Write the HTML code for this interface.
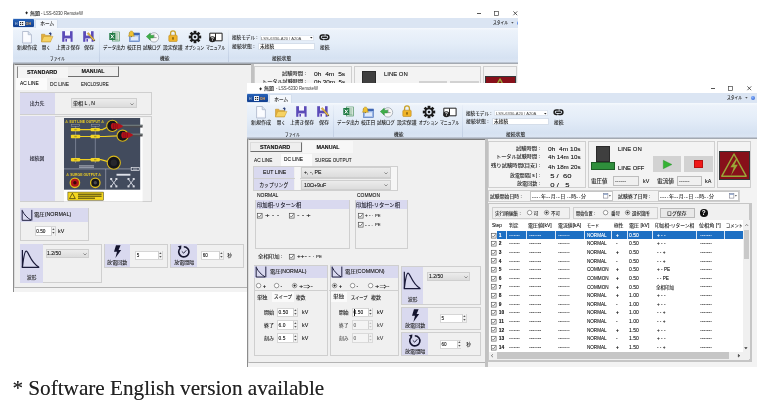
<!DOCTYPE html><html lang="ja"><head><meta charset="utf-8"><title>LSS-6330 RemoteW</title><style>html,body{margin:0;padding:0;background:#fff}#root{position:relative;width:768px;height:406px;overflow:hidden;will-change:transform;font-family:"Liberation Sans","Noto Sans CJK JP",sans-serif;color:#242424}#root div,#root svg{position:absolute;box-sizing:border-box}#root svg{overflow:visible}#root span{position:static}.d{letter-spacing:.5px}.t{line-height:12px;white-space:nowrap;text-shadow:0 0 .4px rgba(40,40,40,.55)}</style></head><body><div id="root"><div style="left:0;top:0;width:518px;height:406px;overflow:hidden">
<div style="left:13px;top:7.6px;width:510px;height:284.2px;background:#fff"></div>
<svg style="left:25px;top:11.4px;" width="3.2" height="3.6" viewBox="0 0 3.2 3.6"><path d="M1.6 .2l1.3 1.6-1.3 1.6-1.3-1.6z" fill="#222"/></svg>
<div class="t" style="left:29.8px;top:7px;font-size:5px;transform:scaleX(1.018);transform-origin:left center;color:#222">無題</div>
<div class="t" style="left:41.4px;top:7.92px;font-size:4.5px;transform:scaleX(0.954);transform-origin:left center;color:#333;text-shadow:none">- LSS-6330 RemoteW</div>
<div style="left:476.6px;top:12.9px;width:4.2px;height:0.7px;background:#555"></div>
<svg style="left:494px;top:10.8px;" width="5" height="5" viewBox="0 0 5 5"><rect x=".5" y=".5" width="4" height="4" fill="none" stroke="#444" stroke-width=".7"/></svg>
<svg style="left:512.6px;top:11px;" width="4.6" height="4.6" viewBox="0 0 4.6 4.6"><path d="M.4 .4l3.8 3.8M4.2 .4l-3.8 3.8" stroke="#333" stroke-width=".8"/></svg>
<div style="left:13px;top:18.1px;width:510px;height:9.7px;background:#dbe5f3"></div>
<div style="left:13.2px;top:19px;width:20.6px;height:8.4px;background:linear-gradient(#2863b8,#123f8f);border-radius:1px"></div>
<div style="left:19.4px;top:20.6px;width:5.2px;height:5.4px;background:#f2f5fb"></div>
<svg style="left:19.4px;top:20.6px;" width="5.2" height="5.4" viewBox="0 0 5.2 5.4"><path d="M1 1.6h1.2M3 1.6h1.2M1 3.4h1.2M3 3.4h1.2" stroke="#111" stroke-width="1"/></svg>
<div class="t" style="left:25.6px;top:17.8px;font-size:3.6px;color:#e8b070;font-weight:bold">OH</div>
<div class="t" style="left:15px;top:17.7px;font-size:3.6px;color:#9fc0f0;font-weight:bold">H</div>
<div style="left:35px;top:18.6px;width:22.6px;height:9.4px;background:#f3f7fc;border:.5px solid #d3deed;border-bottom:none;border-radius:1.2px 1.2px 0 0"></div>
<div class="t" style="left:-103.2px;width:300px;text-align:center;top:18.46px;font-size:4.9px;color:#222"><span style="display:inline-block;transform:scaleX(0.950);transform-origin:center center;">ホーム</span></div>
<div class="t" style="left:493px;top:17.18px;font-size:4.4px;transform:scaleX(0.853);transform-origin:left center;color:#222">スタイル</div>
<svg style="left:510.6px;top:21.8px;" width="3" height="2" viewBox="0 0 3 2"><path d="M.2 .2h2.4l-1.2 1.4z" fill="#222"/></svg>
<div style="left:517px;top:20.8px;width:4.2px;height:4.2px;border-radius:50%;background:radial-gradient(circle at 40% 35%,#8fb6ff,#1f56c8)"></div>
<div style="left:13px;top:27.8px;width:510px;height:34.4px;background:linear-gradient(#f6f9fd 0%,#ecf2fa 8%,#e4edf8 45%,#d6e2f2 88%,#dbe5f3 100%)"></div>
<div style="left:99.3px;top:30px;width:0.7px;height:31.5px;background:linear-gradient(rgba(200,212,230,.1),rgba(186,200,222,.7))"></div>
<div style="left:228.3px;top:30px;width:0.7px;height:31.5px;background:linear-gradient(rgba(200,212,230,.1),rgba(186,200,222,.7))"></div>
<div style="left:333.5px;top:30px;width:0.7px;height:31.5px;background:linear-gradient(rgba(200,212,230,.1),rgba(186,200,222,.7))"></div>
<svg style="left:22.2px;top:30.6px;" width="10" height="12.5" viewBox="0 0 10 12.5"><path d="M0.6 0.5h5.6l3.2 3.2v8.3h-8.8z" fill="#fbfcff" stroke="#a9b4c8" stroke-width=".8"/><path d="M6.2 .5v3.2h3.2" fill="#d5deee" stroke="#a9b4c8" stroke-width=".7"/><path d="M1.4 11.4h7.2" stroke="#d3dbea" stroke-width=".8"/></svg>
<svg style="left:40.6px;top:31.6px;" width="12.4" height="10.4" viewBox="0 0 12.4 10.4"><path d="M.5 9.8v-7.6h3.2l1 1.2h4.8v6.4z" fill="#e3ae3a" stroke="#b88720" stroke-width=".5"/><path d="M7.6 1.8l1.6-1.5 1.8 1.3-1 .2.6 1.4-1.2.4-.6-1.5z" fill="#2a3f7a"/><path d="M.5 9.8l2.3-5.4h9.2l-2.5 5.4z" fill="#f6d262" stroke="#c79a2c" stroke-width=".5"/></svg>
<svg style="left:62px;top:31.2px;" width="12" height="11" viewBox="0 0 12 11"><rect x=".2" y=".2" width="10.4" height="10.6" fill="#5b4bb8"/><rect x="3" y="0" width="5" height="4.6" fill="#f6f6fd"/><rect x="2.4" y="7.4" width="6.2" height="3.6" fill="#f1f1fa"/><rect x="3.4" y="8" width="1.6" height="2.6" fill="#5b4bb8"/></svg>
<svg style="left:83.2px;top:31.2px;" width="12" height="11" viewBox="0 0 12 11"><rect x=".2" y=".2" width="10.4" height="10.6" fill="#5b4bb8"/><rect x="3" y="0" width="5" height="4.6" fill="#f6f6fd"/><rect x="2.4" y="7.4" width="6.2" height="3.6" fill="#f1f1fa"/><rect x="3.4" y="8" width="1.6" height="2.6" fill="#5b4bb8"/><path d="M4.2 2.6l6.2 7 1.4.4-.3-1.6-6.1-6.8z" fill="#e9bd3e" stroke="#86661a" stroke-width=".4"/><path d="M10.6 9.8l1.3.3-.4-1.4z" fill="#333"/></svg>
<svg style="left:108.8px;top:31px;" width="11" height="11" viewBox="0 0 11 11"><rect x="3.5" y="1" width="7" height="9" fill="#fff" stroke="#2d7d46" stroke-width=".6"/><path d="M6 3h3.6M6 5h3.6M6 7h3.6M6 8.8h3.6" stroke="#2d7d46" stroke-width=".7"/><rect x=".3" y="2" width="6" height="7" fill="#1f7a43"/><path d="M1.8 3.6l3 3.9M4.8 3.6l-3 3.9" stroke="#fff" stroke-width="1"/></svg>
<svg style="left:128px;top:30.4px;" width="12" height="12" viewBox="0 0 12 12"><rect x="1.5" y="3" width="10" height="8.6" fill="#9ab6e6" stroke="#4a6fb5" stroke-width=".6"/><rect x="1.5" y="3" width="10" height="2" fill="#3f66b3"/><rect x="3" y="6.3" width="7" height="4" fill="#dfe9fa"/><path d="M1 5.2c0-3 1-4.2 2.4-4.2s2.4 1.2 2.4 4.2l.7 1h-6.2z" fill="#f1c232" stroke="#9b7a12" stroke-width=".4"/><circle cx="3.4" cy="6.6" r=".7" fill="#9b7a12"/></svg>
<svg style="left:146.2px;top:30.8px;" width="13" height="12" viewBox="0 0 13 12"><circle cx="8" cy="6.4" r="4.7" fill="#f7f7f7" stroke="#9aa3ad" stroke-width=".8"/><path d="M8 3.4v3.2h2.6" stroke="#777" stroke-width=".7" fill="none"/><path d="M.3 5.6l4-3.6v2.2h3.2v2.8h-3.2v2.2z" fill="#3fae49" stroke="#1f7a2b" stroke-width=".4"/></svg>
<svg style="left:168.2px;top:30.2px;" width="10" height="12" viewBox="0 0 10 12"><path d="M2.6 5.5v-2.2a2.4 2.4 0 0 1 4.8 0v2.2" fill="none" stroke="#c9a227" stroke-width="1.3"/><rect x=".8" y="5.2" width="8.4" height="6.3" rx=".8" fill="#f0b429" stroke="#b07c10" stroke-width=".5"/><rect x="4.3" y="7.2" width="1.4" height="2.4" fill="#7a5607"/></svg>
<svg style="left:188.6px;top:30.8px;" width="12" height="12" viewBox="0 0 12 12"><rect x="4.6" y="-.2" width="2.8" height="12.4" transform="rotate(0 6 6)" fill="#1b1b1b"/><rect x="4.6" y="-.2" width="2.8" height="12.4" transform="rotate(45 6 6)" fill="#1b1b1b"/><rect x="4.6" y="-.2" width="2.8" height="12.4" transform="rotate(90 6 6)" fill="#1b1b1b"/><rect x="4.6" y="-.2" width="2.8" height="12.4" transform="rotate(135 6 6)" fill="#1b1b1b"/><circle cx="6" cy="6" r="4.3" fill="#1b1b1b"/><circle cx="6" cy="6" r="2.7" fill="#e4ecf6"/><circle cx="6" cy="6" r="1.3" fill="#1b1b1b"/></svg>
<svg style="left:209px;top:31.6px;" width="14" height="11" viewBox="0 0 14 11"><path d="M6.5 1.2h6.6v7.6h-6.6" fill="#fff" stroke="#222" stroke-width="1"/><path d="M.8 1.2h5.7v7.6h-5.7z" fill="#fff" stroke="#222" stroke-width="1"/><circle cx="3.4" cy="7.2" r="3" fill="#222"/><text x="3.4" y="9" font-size="4.6" font-family="Liberation Sans,sans-serif" font-weight="bold" fill="#fff" text-anchor="middle">?</text></svg>
<div class="t" style="left:17.2px;top:41.96px;font-size:4.9px;transform:scaleX(1.022);transform-origin:left center;">新規作成</div>
<div class="t" style="left:42.4px;top:41.96px;font-size:4.9px;transform:scaleX(0.857);transform-origin:left center;">開く</div>
<div class="t" style="left:56px;top:41.96px;font-size:4.9px;transform:scaleX(0.981);transform-origin:left center;">上書き保存</div>
<div class="t" style="left:84.4px;top:41.96px;font-size:4.9px;transform:scaleX(1.041);transform-origin:left center;">保存</div>
<div class="t" style="left:103px;top:41.96px;font-size:4.9px;transform:scaleX(0.899);transform-origin:left center;">データ出力</div>
<div class="t" style="left:127px;top:41.96px;font-size:4.9px;transform:scaleX(0.980);transform-origin:left center;">校正日</div>
<div class="t" style="left:143.2px;top:41.96px;font-size:4.9px;transform:scaleX(0.909);transform-origin:left center;">試験ログ</div>
<div class="t" style="left:163px;top:41.96px;font-size:4.9px;transform:scaleX(1.001);transform-origin:left center;">設定保護</div>
<div class="t" style="left:185px;top:41.96px;font-size:4.9px;transform:scaleX(0.777);transform-origin:left center;">オプション</div>
<div class="t" style="left:205.8px;top:41.96px;font-size:4.9px;transform:scaleX(0.781);transform-origin:left center;">マニュアル</div>
<div class="t" style="left:50.4px;top:53.46px;font-size:4.6px;transform:scaleX(0.794);transform-origin:left center;color:#222">ファイル</div>
<div class="t" style="left:159.6px;top:53.46px;font-size:4.6px;transform:scaleX(1.021);transform-origin:left center;color:#222">機能</div>
<div class="t" style="left:272px;top:53.46px;font-size:4.6px;transform:scaleX(1.055);transform-origin:left center;color:#222">接続状態</div>
<div class="t" style="left:232px;top:32.49px;font-size:4.7px;transform:scaleX(0.983);transform-origin:left center;">接続モデル :</div>
<div class="t" style="left:232px;top:41.39px;font-size:4.7px;transform:scaleX(1.058);transform-origin:left center;">接続状態 :</div>
<div style="left:260px;top:34.6px;width:53.6px;height:6.8px;background:#fff;border:.5px solid #dfe6f0"></div>
<div class="t" style="left:261.4px;top:32.54px;font-size:4px;transform:scaleX(1.027);transform-origin:left center;color:#444;text-shadow:none">LSS-6330-A20 / A20A</div>
<svg style="left:309.6px;top:37.4px;" width="2.6" height="1.8" viewBox="0 0 2.6 1.8"><path d="M.1 .1h2.4l-1.2 1.5z" fill="#222"/></svg>
<div style="left:258.2px;top:42.9px;width:57px;height:6.7px;background:#fff;border:.5px solid #d5deea"></div>
<div class="t" style="left:260.2px;top:41.09px;font-size:4.7px;transform:scaleX(1.009);transform-origin:left center;color:#222">未接続</div>
<svg style="left:319.2px;top:33.8px;" width="11" height="6.4" viewBox="0 0 11 6.4"><path d="M5.2 1H3.3a2.2 2.2 0 0 0 0 4.4H4M5.8 5.4h1.9a2.2 2.2 0 0 0 0-4.4H7M3.4 3.2h4.2" fill="none" stroke="#1b1b1b" stroke-width="1.5" stroke-linecap="round"/></svg>
<div class="t" style="left:319.6px;top:41.83px;font-size:4.8px;transform:scaleX(0.978);transform-origin:left center;">接続</div>
<div style="left:13px;top:64px;width:510px;height:227.6px;background:#f3f3f3"></div>
<div style="left:13px;top:62.2px;width:510px;height:2.2px;background:linear-gradient(#d3deee 0%,#a9b0bb 45%,#9da3ac 70%,#c4c7cc 100%)"></div>
<div style="left:13px;top:63.6px;width:1px;height:228.6px;background:#8c8c8c"></div>
<div style="left:14px;top:64px;width:237.2px;height:224.4px;border-bottom:1.2px solid #b4b4b4;border-left:.6px solid #dcdcdc;border-top:1.3px solid #7c7c7c;background:#f0f0f0"></div>
<div style="left:251.2px;top:64px;width:2.8px;height:227.6px;background:#c1c1c1"></div>
<div style="left:253.5px;top:66.3px;width:98.6px;height:47px;border:.7px solid #cfcfcf"></div>
<div class="t" style="left:282.1px;top:67.73px;font-size:4.8px;transform:scaleX(1.098);transform-origin:left center;color:#222">試験時間 :</div>
<div class="t" style="left:314.3px;top:67.82px;font-size:5.9px;transform:scaleX(1.134);transform-origin:left center;color:#222;white-space:pre">0h  4m  5s</div>
<div class="t" style="left:262.1px;top:76.13px;font-size:4.8px;transform:scaleX(1.072);transform-origin:left center;color:#222">トータル試験時間 :</div>
<div class="t" style="left:314.3px;top:76.22px;font-size:5.9px;transform:scaleX(1.070);transform-origin:left center;color:#222;white-space:pre">0h 30m  5s</div>
<div class="t" style="left:256.9px;top:85.33px;font-size:4.8px;transform:scaleX(1.112);transform-origin:left center;color:#222">残り試験時間(目安) :</div>
<div class="t" style="left:314.3px;top:85.42px;font-size:5.9px;color:#222;white-space:pre"></div>
<div class="t" style="left:275.9px;top:94.53px;font-size:4.8px;transform:scaleX(1.020);transform-origin:left center;color:#222">放電間隔[ s ] :</div>
<div class="t" style="left:314.3px;top:94.62px;font-size:5.9px;color:#222;white-space:pre"></div>
<div class="t" style="left:282.9px;top:103.33px;font-size:4.8px;transform:scaleX(1.061);transform-origin:left center;color:#222">放電回数 :</div>
<div class="t" style="left:314.3px;top:103.42px;font-size:5.9px;color:#222;white-space:pre"></div>
<div style="left:353.9px;top:66.3px;width:127px;height:47px;border:.7px solid #cfcfcf"></div>
<div style="left:361.9px;top:70.5px;width:14.2px;height:16px;background:#3f3f3f;border:.7px solid #2a2a2a"></div>
<div style="left:356.5px;top:86.9px;width:24.6px;height:8px;background:#2f8f3c;border:.8px solid #1d5d26"></div>
<div class="t" style="left:383.7px;top:68.22px;font-size:5.6px;transform:scaleX(1.063);transform-origin:left center;color:#222">LINE ON</div>
<div class="t" style="left:383.7px;top:87.12px;font-size:5.6px;transform:scaleX(1.048);transform-origin:left center;color:#222">LINE OFF</div>
<div style="left:418.5px;top:80.9px;width:28.6px;height:15.6px;background:#d2d2d2"></div>
<div style="left:449.9px;top:80.9px;width:29.2px;height:15.6px;background:#d2d2d2"></div>
<svg style="left:428.5px;top:84.7px;" width="9.4" height="9" viewBox="0 0 9.4 9"><path d="M.3 .3l8.6 4.2-8.6 4.2z" fill="#34b233" stroke="#1f8a24" stroke-width=".4"/></svg>
<div style="left:459.9px;top:85.1px;width:9.2px;height:8px;background:#f01818;border:.5px solid #b80f0f"></div>
<div class="t" style="left:356.5px;top:99.87px;font-size:5.2px;transform:scaleX(1.053);transform-origin:left center;">電圧値</div>
<div style="left:378.7px;top:101.3px;width:26.2px;height:9.4px;background:#f0f0f0;border:.8px solid #bdbdbd"></div>
<div class="t" style="left:380.9px;top:100.56px;font-size:4.6px;transform:scaleX(1.197);transform-origin:left center;color:#555">------</div>
<div class="t" style="left:408.7px;top:99.84px;font-size:5.4px;transform:scaleX(0.985);transform-origin:left center;">kV</div>
<div class="t" style="left:422.9px;top:99.87px;font-size:5.2px;transform:scaleX(1.091);transform-origin:left center;">電流値</div>
<div style="left:442.9px;top:101.3px;width:25.2px;height:9.4px;background:#f0f0f0;border:.8px solid #bdbdbd"></div>
<div class="t" style="left:444.9px;top:100.56px;font-size:4.6px;transform:scaleX(1.154);transform-origin:left center;color:#555">------</div>
<div class="t" style="left:471.3px;top:99.84px;font-size:5.4px;transform:scaleX(1.016);transform-origin:left center;">kA</div>
<div style="left:482.9px;top:66.3px;width:33.8px;height:47px;border:.7px solid #cfcfcf"></div>
<div style="left:484.7px;top:75.5px;width:31.2px;height:29.8px;background:#87101a;border:1.7px solid #33383a"></div>
<svg style="left:486.1px;top:77.1px;" width="28" height="27" viewBox="0 0 28 27"><path d="M14 2l12.2 22.2h-24.4z" fill="none" stroke="#9aa638" stroke-width="1.5" stroke-linejoin="round"/><path d="M16.2 6.4L10.4 15.2H13.8L11 23.6L17.8 12.8H14.4L17.6 6.4Z" fill="#9aa638"/></svg>
<div style="left:253.5px;top:115.1px;width:252.8px;height:11.6px;border:.7px solid #cfcfcf"></div>
<div class="t" style="left:256.1px;top:115.63px;font-size:4.8px;transform:scaleX(1.011);transform-origin:left center;">試験開始日時 :</div>
<div style="left:295.9px;top:116.3px;width:82.8px;height:9.2px;background:#fff;border:.6px solid #c6c6c6"></div>
<div class="t" style="left:298.1px;top:115.48px;font-size:4.4px;transform:scaleX(1.152);transform-origin:left center;color:#333"><span class="d">----</span>年<span class="d">--</span>月<span class="d">--</span>日 <span class="d">--</span>時<span class="d">--</span>分</div>
<svg style="left:369.1px;top:118.3px;" width="8.4" height="5.6" viewBox="0 0 8.4 5.6"><rect x=".3" y=".5" width="4.6" height="4.6" fill="#fff" stroke="#667" stroke-width=".5"/><rect x=".3" y=".5" width="4.6" height="1.3" fill="#8aa0c8"/><path d="M5.8 2.2h2.2l-1.1 1.4z" fill="#333"/></svg>
<div class="t" style="left:383.5px;top:115.63px;font-size:4.8px;transform:scaleX(1.030);transform-origin:left center;">試験終了日時 :</div>
<div style="left:423.7px;top:116.3px;width:81.4px;height:9.2px;background:#fff;border:.6px solid #c6c6c6"></div>
<div class="t" style="left:425.5px;top:115.48px;font-size:4.4px;transform:scaleX(1.152);transform-origin:left center;color:#333"><span class="d">----</span>年<span class="d">--</span>月<span class="d">--</span>日 <span class="d">--</span>時<span class="d">--</span>分</div>
<svg style="left:494.9px;top:118.3px;" width="8.4" height="5.6" viewBox="0 0 8.4 5.6"><rect x=".3" y=".5" width="4.6" height="4.6" fill="#fff" stroke="#667" stroke-width=".5"/><rect x=".3" y=".5" width="4.6" height="1.3" fill="#8aa0c8"/><path d="M5.8 2.2h2.2l-1.1 1.4z" fill="#333"/></svg>
<div style="left:254.1px;top:128.3px;width:264.2px;height:159px;border:solid #c6c6c6;border-width:.8px 3px 2.8px .8px;background:#f0f0f0"></div>
<div style="left:257.9px;top:132.3px;width:78.2px;height:11.4px;border:.7px solid #cfcfcf"></div>
<div class="t" style="left:260.5px;top:132.53px;font-size:4.8px;transform:scaleX(0.968);transform-origin:left center;">実行順編集 :</div>
<svg style="left:292.9px;top:135.2px;" width="5.2" height="5.2" viewBox="0 0 5.2 5.2"><circle cx="2.6" cy="2.6" r="2.25" fill="#fff" stroke="#3c3c3c" stroke-width=".5"/></svg>
<div class="t" style="left:299.5px;top:132.53px;font-size:4.8px;">可</div>
<svg style="left:309.9px;top:135.2px;" width="5.2" height="5.2" viewBox="0 0 5.2 5.2"><circle cx="2.6" cy="2.6" r="2.25" fill="#fff" stroke="#3c3c3c" stroke-width=".5"/><circle cx="2.6" cy="2.6" r="1.15" fill="#222"/></svg>
<div class="t" style="left:316.9px;top:132.53px;font-size:4.8px;transform:scaleX(0.937);transform-origin:left center;">不可</div>
<div style="left:338.9px;top:132.3px;width:84.6px;height:11.4px;border:.7px solid #cfcfcf"></div>
<div class="t" style="left:341.7px;top:132.53px;font-size:4.8px;transform:scaleX(0.860);transform-origin:left center;">開始位置 :</div>
<svg style="left:369.1px;top:135.2px;" width="5.2" height="5.2" viewBox="0 0 5.2 5.2"><circle cx="2.6" cy="2.6" r="2.25" fill="#fff" stroke="#3c3c3c" stroke-width=".5"/></svg>
<div class="t" style="left:376.7px;top:132.53px;font-size:4.8px;transform:scaleX(0.957);transform-origin:left center;">番号</div>
<svg style="left:391.3px;top:135.2px;" width="5.2" height="5.2" viewBox="0 0 5.2 5.2"><circle cx="2.6" cy="2.6" r="2.25" fill="#fff" stroke="#3c3c3c" stroke-width=".5"/><circle cx="2.6" cy="2.6" r="1.15" fill="#222"/></svg>
<div class="t" style="left:398.3px;top:132.53px;font-size:4.8px;transform:scaleX(0.927);transform-origin:left center;">選択箇所</div>
<div style="left:425.5px;top:132.9px;width:35px;height:9.8px;background:#e9e9e9;border:.7px solid #b9b9b9"></div>
<div class="t" style="left:293px;width:300px;text-align:center;top:132.56px;font-size:4.9px;"><span style="display:inline-block;transform:scaleX(0.991);transform-origin:center center;">ログ保存</span></div>
<div style="left:465.9px;top:133.9px;width:7.6px;height:7.6px;border-radius:50%;background:#111"></div>
<div class="t" style="left:319.7px;width:300px;text-align:center;top:132.2px;font-size:6.4px;color:#fff;font-weight:bold">?</div>
<div style="left:254.9px;top:145.1px;width:260.8px;height:139.2px;background:#fff"></div>
<div class="t" style="left:257.5px;top:144.99px;font-size:4.7px;transform:scaleX(1.036);transform-origin:left center;color:#222">Step</div>
<div class="t" style="left:275.1px;top:144.99px;font-size:4.7px;transform:scaleX(1.001);transform-origin:left center;color:#222">判定</div>
<div class="t" style="left:294.3px;top:144.99px;font-size:4.7px;transform:scaleX(1.066);transform-origin:left center;color:#222">電圧値[kV]</div>
<div class="t" style="left:323.9px;top:144.99px;font-size:4.7px;transform:scaleX(1.048);transform-origin:left center;color:#222">電流値[kA]</div>
<div class="t" style="left:353.1px;top:144.99px;font-size:4.7px;transform:scaleX(0.852);transform-origin:left center;color:#222">モード</div>
<div class="t" style="left:380.1px;top:144.99px;font-size:4.7px;transform:scaleX(1.001);transform-origin:left center;color:#222">極性</div>
<div class="t" style="left:394.7px;top:144.99px;font-size:4.7px;transform:scaleX(1.087);transform-origin:left center;color:#222">電圧 [kV]</div>
<div class="t" style="left:420.5px;top:144.99px;font-size:4.7px;transform:scaleX(1.010);transform-origin:left center;color:#222">印加相-リターン相</div>
<div class="t" style="left:465.1px;top:144.99px;font-size:4.7px;transform:scaleX(1.088);transform-origin:left center;color:#222">位相角 [°]</div>
<div class="t" style="left:492.1px;top:144.99px;font-size:4.7px;transform:scaleX(0.895);transform-origin:left center;color:#222">コメント</div>
<div style="left:509.1px;top:145.1px;width:6.6px;height:131.6px;background:#f0f0f0"></div>
<div style="left:509.5px;top:154.9px;width:5.6px;height:29.4px;background:#c9c9c9"></div>
<svg style="left:510.5px;top:149.3px;" width="3.4" height="2.2" viewBox="0 0 3.4 2.2"><path d="M.3 1.9l1.4-1.5 1.4 1.5" fill="none" stroke="#444" stroke-width=".6"/></svg>
<svg style="left:510.3px;top:272.3px;" width="3.8" height="2.4" viewBox="0 0 3.8 2.4"><path d="M.2 .2h3.4l-1.7 2z" fill="#333"/></svg>
<div style="left:263.1px;top:155.7px;width:246px;height:8.5px;background:#1d6fc3"></div>
<div style="left:271.9px;top:155.7px;width:0.6px;height:8.5px;background:#dbe8f7"></div>
<div style="left:292.1px;top:155.7px;width:0.6px;height:8.5px;background:#dbe8f7"></div>
<div style="left:321.1px;top:155.7px;width:0.6px;height:8.5px;background:#dbe8f7"></div>
<div style="left:350px;top:155.7px;width:0.6px;height:8.5px;background:#dbe8f7"></div>
<div style="left:377px;top:155.7px;width:0.6px;height:8.5px;background:#dbe8f7"></div>
<div style="left:392.8px;top:155.7px;width:0.6px;height:8.5px;background:#dbe8f7"></div>
<div style="left:418px;top:155.7px;width:0.6px;height:8.5px;background:#dbe8f7"></div>
<div style="left:462px;top:155.7px;width:0.6px;height:8.5px;background:#dbe8f7"></div>
<div style="left:489.5px;top:155.7px;width:0.6px;height:8.5px;background:#dbe8f7"></div>
<svg style="left:257.3px;top:157.5px;" width="5.4" height="5.4" viewBox="0 0 5.4 5.4"><rect x=".3" y=".3" width="4.8" height="4.8" fill="#fff" stroke="#555" stroke-width=".65"/><path d="M1.2 2.8l1.2 1.3 2-2.7" fill="none" stroke="#555" stroke-width=".75"/></svg>
<div class="t" style="left:264.7px;top:154.76px;font-size:4.9px;color:#fff;text-shadow:0 0 .4px rgba(255,255,255,.6);font-weight:bold">1</div>
<div class="t" style="left:275.1px;top:154.66px;font-size:4.6px;transform:scaleX(1.008);transform-origin:left center;color:#e8f0fa;font-weight:bold;text-shadow:none">-------</div>
<div class="t" style="left:294.7px;top:154.66px;font-size:4.6px;transform:scaleX(1.138);transform-origin:left center;color:#e8f0fa;font-weight:bold;text-shadow:none">-------</div>
<div class="t" style="left:324.1px;top:154.66px;font-size:4.6px;transform:scaleX(1.082);transform-origin:left center;color:#e8f0fa;font-weight:bold;text-shadow:none">-------</div>
<div class="t" style="left:353.1px;top:154.69px;font-size:4.7px;transform:scaleX(0.977);transform-origin:left center;color:#fff;text-shadow:0 0 .4px rgba(255,255,255,.6)">NORMAL</div>
<div class="t" style="left:381.9px;top:154.73px;font-size:4.8px;color:#fff;text-shadow:0 0 .4px rgba(255,255,255,.6);font-weight:bold">+</div>
<div class="t" style="left:394.7px;top:154.73px;font-size:4.8px;transform:scaleX(1.049);transform-origin:left center;color:#fff;text-shadow:0 0 .4px rgba(255,255,255,.6)">0.50</div>
<div class="t" style="left:422.9px;top:154.69px;font-size:4.7px;color:#fff;text-shadow:0 0 .4px rgba(255,255,255,.6);white-space:pre">+ - -</div>
<div class="t" style="left:465.5px;top:154.66px;font-size:4.6px;transform:scaleX(1.120);transform-origin:left center;color:#e8f0fa;font-weight:bold;text-shadow:none">-------</div>
<svg style="left:257.3px;top:166.12px;" width="5.4" height="5.4" viewBox="0 0 5.4 5.4"><rect x=".3" y=".3" width="4.8" height="4.8" fill="#fff" stroke="#555" stroke-width=".65"/><path d="M1.2 2.8l1.2 1.3 2-2.7" fill="none" stroke="#555" stroke-width=".75"/></svg>
<div class="t" style="left:264.7px;top:163.38px;font-size:4.9px;color:#262626;font-weight:bold">2</div>
<div class="t" style="left:275.1px;top:163.28px;font-size:4.6px;transform:scaleX(1.008);transform-origin:left center;color:#555;font-weight:bold">-------</div>
<div class="t" style="left:294.7px;top:163.28px;font-size:4.6px;transform:scaleX(1.138);transform-origin:left center;color:#555;font-weight:bold">-------</div>
<div class="t" style="left:324.1px;top:163.28px;font-size:4.6px;transform:scaleX(1.082);transform-origin:left center;color:#555;font-weight:bold">-------</div>
<div class="t" style="left:353.1px;top:163.31px;font-size:4.7px;transform:scaleX(0.977);transform-origin:left center;color:#262626">NORMAL</div>
<div class="t" style="left:381.9px;top:163.35px;font-size:4.8px;color:#262626">-</div>
<div class="t" style="left:394.7px;top:163.35px;font-size:4.8px;transform:scaleX(1.049);transform-origin:left center;color:#262626">0.50</div>
<div class="t" style="left:422.9px;top:163.31px;font-size:4.7px;color:#262626;white-space:pre">+ - -</div>
<div class="t" style="left:465.5px;top:163.28px;font-size:4.6px;transform:scaleX(1.120);transform-origin:left center;color:#555;font-weight:bold">-------</div>
<svg style="left:257.3px;top:174.74px;" width="5.4" height="5.4" viewBox="0 0 5.4 5.4"><rect x=".3" y=".3" width="4.8" height="4.8" fill="#fff" stroke="#555" stroke-width=".65"/><path d="M1.2 2.8l1.2 1.3 2-2.7" fill="none" stroke="#555" stroke-width=".75"/></svg>
<div class="t" style="left:264.7px;top:172px;font-size:4.9px;color:#262626;font-weight:bold">3</div>
<div class="t" style="left:275.1px;top:171.9px;font-size:4.6px;transform:scaleX(1.008);transform-origin:left center;color:#555;font-weight:bold">-------</div>
<div class="t" style="left:294.7px;top:171.9px;font-size:4.6px;transform:scaleX(1.138);transform-origin:left center;color:#555;font-weight:bold">-------</div>
<div class="t" style="left:324.1px;top:171.9px;font-size:4.6px;transform:scaleX(1.082);transform-origin:left center;color:#555;font-weight:bold">-------</div>
<div class="t" style="left:353.1px;top:171.93px;font-size:4.7px;transform:scaleX(0.977);transform-origin:left center;color:#262626">NORMAL</div>
<div class="t" style="left:381.9px;top:171.97px;font-size:4.8px;color:#262626;font-weight:bold">+</div>
<div class="t" style="left:394.7px;top:171.97px;font-size:4.8px;transform:scaleX(1.049);transform-origin:left center;color:#262626">0.50</div>
<div class="t" style="left:422.9px;top:171.93px;font-size:4.7px;color:#262626;white-space:pre">- - +</div>
<div class="t" style="left:465.5px;top:171.9px;font-size:4.6px;transform:scaleX(1.120);transform-origin:left center;color:#555;font-weight:bold">-------</div>
<svg style="left:257.3px;top:183.36px;" width="5.4" height="5.4" viewBox="0 0 5.4 5.4"><rect x=".3" y=".3" width="4.8" height="4.8" fill="#fff" stroke="#555" stroke-width=".65"/><path d="M1.2 2.8l1.2 1.3 2-2.7" fill="none" stroke="#555" stroke-width=".75"/></svg>
<div class="t" style="left:264.7px;top:180.62px;font-size:4.9px;color:#262626;font-weight:bold">4</div>
<div class="t" style="left:275.1px;top:180.52px;font-size:4.6px;transform:scaleX(1.008);transform-origin:left center;color:#555;font-weight:bold">-------</div>
<div class="t" style="left:294.7px;top:180.52px;font-size:4.6px;transform:scaleX(1.138);transform-origin:left center;color:#555;font-weight:bold">-------</div>
<div class="t" style="left:324.1px;top:180.52px;font-size:4.6px;transform:scaleX(1.082);transform-origin:left center;color:#555;font-weight:bold">-------</div>
<div class="t" style="left:353.1px;top:180.55px;font-size:4.7px;transform:scaleX(0.977);transform-origin:left center;color:#262626">NORMAL</div>
<div class="t" style="left:381.9px;top:180.59px;font-size:4.8px;color:#262626">-</div>
<div class="t" style="left:394.7px;top:180.59px;font-size:4.8px;transform:scaleX(1.049);transform-origin:left center;color:#262626">0.50</div>
<div class="t" style="left:422.9px;top:180.55px;font-size:4.7px;color:#262626;white-space:pre">- - +</div>
<div class="t" style="left:465.5px;top:180.52px;font-size:4.6px;transform:scaleX(1.120);transform-origin:left center;color:#555;font-weight:bold">-------</div>
<svg style="left:257.3px;top:191.98px;" width="5.4" height="5.4" viewBox="0 0 5.4 5.4"><rect x=".3" y=".3" width="4.8" height="4.8" fill="#fff" stroke="#555" stroke-width=".65"/><path d="M1.2 2.8l1.2 1.3 2-2.7" fill="none" stroke="#555" stroke-width=".75"/></svg>
<div class="t" style="left:264.7px;top:189.24px;font-size:4.9px;color:#262626;font-weight:bold">5</div>
<div class="t" style="left:275.1px;top:189.14px;font-size:4.6px;transform:scaleX(1.008);transform-origin:left center;color:#555;font-weight:bold">-------</div>
<div class="t" style="left:294.7px;top:189.14px;font-size:4.6px;transform:scaleX(1.138);transform-origin:left center;color:#555;font-weight:bold">-------</div>
<div class="t" style="left:324.1px;top:189.14px;font-size:4.6px;transform:scaleX(1.082);transform-origin:left center;color:#555;font-weight:bold">-------</div>
<div class="t" style="left:353.1px;top:189.17px;font-size:4.7px;transform:scaleX(0.987);transform-origin:left center;color:#262626">COMMON</div>
<div class="t" style="left:381.9px;top:189.21px;font-size:4.8px;color:#262626;font-weight:bold">+</div>
<div class="t" style="left:394.7px;top:189.21px;font-size:4.8px;transform:scaleX(1.049);transform-origin:left center;color:#262626">0.50</div>
<div class="t" style="left:422.9px;top:189.17px;font-size:4.7px;color:#262626;white-space:pre">+ - PE</div>
<div class="t" style="left:465.5px;top:189.14px;font-size:4.6px;transform:scaleX(1.120);transform-origin:left center;color:#555;font-weight:bold">-------</div>
<svg style="left:257.3px;top:200.6px;" width="5.4" height="5.4" viewBox="0 0 5.4 5.4"><rect x=".3" y=".3" width="4.8" height="4.8" fill="#fff" stroke="#555" stroke-width=".65"/><path d="M1.2 2.8l1.2 1.3 2-2.7" fill="none" stroke="#555" stroke-width=".75"/></svg>
<div class="t" style="left:264.7px;top:197.86px;font-size:4.9px;color:#262626;font-weight:bold">6</div>
<div class="t" style="left:275.1px;top:197.76px;font-size:4.6px;transform:scaleX(1.008);transform-origin:left center;color:#555;font-weight:bold">-------</div>
<div class="t" style="left:294.7px;top:197.76px;font-size:4.6px;transform:scaleX(1.138);transform-origin:left center;color:#555;font-weight:bold">-------</div>
<div class="t" style="left:324.1px;top:197.76px;font-size:4.6px;transform:scaleX(1.082);transform-origin:left center;color:#555;font-weight:bold">-------</div>
<div class="t" style="left:353.1px;top:197.79px;font-size:4.7px;transform:scaleX(0.987);transform-origin:left center;color:#262626">COMMON</div>
<div class="t" style="left:381.9px;top:197.83px;font-size:4.8px;color:#262626;font-weight:bold">+</div>
<div class="t" style="left:394.7px;top:197.83px;font-size:4.8px;transform:scaleX(1.049);transform-origin:left center;color:#262626">0.50</div>
<div class="t" style="left:422.9px;top:197.79px;font-size:4.7px;color:#262626;white-space:pre">- - PE</div>
<div class="t" style="left:465.5px;top:197.76px;font-size:4.6px;transform:scaleX(1.120);transform-origin:left center;color:#555;font-weight:bold">-------</div>
<svg style="left:257.3px;top:209.22px;" width="5.4" height="5.4" viewBox="0 0 5.4 5.4"><rect x=".3" y=".3" width="4.8" height="4.8" fill="#fff" stroke="#555" stroke-width=".65"/><path d="M1.2 2.8l1.2 1.3 2-2.7" fill="none" stroke="#555" stroke-width=".75"/></svg>
<div class="t" style="left:264.7px;top:206.48px;font-size:4.9px;color:#262626;font-weight:bold">7</div>
<div class="t" style="left:275.1px;top:206.38px;font-size:4.6px;transform:scaleX(1.008);transform-origin:left center;color:#555;font-weight:bold">-------</div>
<div class="t" style="left:294.7px;top:206.38px;font-size:4.6px;transform:scaleX(1.138);transform-origin:left center;color:#555;font-weight:bold">-------</div>
<div class="t" style="left:324.1px;top:206.38px;font-size:4.6px;transform:scaleX(1.082);transform-origin:left center;color:#555;font-weight:bold">-------</div>
<div class="t" style="left:353.1px;top:206.41px;font-size:4.7px;transform:scaleX(0.987);transform-origin:left center;color:#262626">COMMON</div>
<div class="t" style="left:381.9px;top:206.45px;font-size:4.8px;color:#262626;font-weight:bold">+</div>
<div class="t" style="left:394.7px;top:206.45px;font-size:4.8px;transform:scaleX(1.049);transform-origin:left center;color:#262626">0.50</div>
<div class="t" style="left:421.9px;top:206.41px;font-size:4.7px;transform:scaleX(0.959);transform-origin:left center;color:#262626">全相印加</div>
<div class="t" style="left:465.5px;top:206.38px;font-size:4.6px;transform:scaleX(1.120);transform-origin:left center;color:#555;font-weight:bold">-------</div>
<svg style="left:257.3px;top:217.84px;" width="5.4" height="5.4" viewBox="0 0 5.4 5.4"><rect x=".3" y=".3" width="4.8" height="4.8" fill="#fff" stroke="#555" stroke-width=".65"/><path d="M1.2 2.8l1.2 1.3 2-2.7" fill="none" stroke="#555" stroke-width=".75"/></svg>
<div class="t" style="left:264.7px;top:215.1px;font-size:4.9px;color:#262626;font-weight:bold">8</div>
<div class="t" style="left:275.1px;top:215px;font-size:4.6px;transform:scaleX(1.008);transform-origin:left center;color:#555;font-weight:bold">-------</div>
<div class="t" style="left:294.7px;top:215px;font-size:4.6px;transform:scaleX(1.138);transform-origin:left center;color:#555;font-weight:bold">-------</div>
<div class="t" style="left:324.1px;top:215px;font-size:4.6px;transform:scaleX(1.082);transform-origin:left center;color:#555;font-weight:bold">-------</div>
<div class="t" style="left:353.1px;top:215.03px;font-size:4.7px;transform:scaleX(0.977);transform-origin:left center;color:#262626">NORMAL</div>
<div class="t" style="left:381.9px;top:215.07px;font-size:4.8px;color:#262626;font-weight:bold">+</div>
<div class="t" style="left:394.7px;top:215.07px;font-size:4.8px;transform:scaleX(1.049);transform-origin:left center;color:#262626">1.00</div>
<div class="t" style="left:422.9px;top:215.03px;font-size:4.7px;color:#262626;white-space:pre">+ - -</div>
<div class="t" style="left:465.5px;top:215px;font-size:4.6px;transform:scaleX(1.120);transform-origin:left center;color:#555;font-weight:bold">-------</div>
<svg style="left:257.3px;top:226.46px;" width="5.4" height="5.4" viewBox="0 0 5.4 5.4"><rect x=".3" y=".3" width="4.8" height="4.8" fill="#fff" stroke="#555" stroke-width=".65"/><path d="M1.2 2.8l1.2 1.3 2-2.7" fill="none" stroke="#555" stroke-width=".75"/></svg>
<div class="t" style="left:264.7px;top:223.72px;font-size:4.9px;color:#262626;font-weight:bold">9</div>
<div class="t" style="left:275.1px;top:223.62px;font-size:4.6px;transform:scaleX(1.008);transform-origin:left center;color:#555;font-weight:bold">-------</div>
<div class="t" style="left:294.7px;top:223.62px;font-size:4.6px;transform:scaleX(1.138);transform-origin:left center;color:#555;font-weight:bold">-------</div>
<div class="t" style="left:324.1px;top:223.62px;font-size:4.6px;transform:scaleX(1.082);transform-origin:left center;color:#555;font-weight:bold">-------</div>
<div class="t" style="left:353.1px;top:223.65px;font-size:4.7px;transform:scaleX(0.977);transform-origin:left center;color:#262626">NORMAL</div>
<div class="t" style="left:381.9px;top:223.69px;font-size:4.8px;color:#262626">-</div>
<div class="t" style="left:394.7px;top:223.69px;font-size:4.8px;transform:scaleX(1.049);transform-origin:left center;color:#262626">1.00</div>
<div class="t" style="left:422.9px;top:223.65px;font-size:4.7px;color:#262626;white-space:pre">+ - -</div>
<div class="t" style="left:465.5px;top:223.62px;font-size:4.6px;transform:scaleX(1.120);transform-origin:left center;color:#555;font-weight:bold">-------</div>
<svg style="left:257.3px;top:235.08px;" width="5.4" height="5.4" viewBox="0 0 5.4 5.4"><rect x=".3" y=".3" width="4.8" height="4.8" fill="#fff" stroke="#555" stroke-width=".65"/><path d="M1.2 2.8l1.2 1.3 2-2.7" fill="none" stroke="#555" stroke-width=".75"/></svg>
<div class="t" style="left:264.7px;top:232.34px;font-size:4.9px;color:#262626;font-weight:bold">10</div>
<div class="t" style="left:275.1px;top:232.24px;font-size:4.6px;transform:scaleX(1.008);transform-origin:left center;color:#555;font-weight:bold">-------</div>
<div class="t" style="left:294.7px;top:232.24px;font-size:4.6px;transform:scaleX(1.138);transform-origin:left center;color:#555;font-weight:bold">-------</div>
<div class="t" style="left:324.1px;top:232.24px;font-size:4.6px;transform:scaleX(1.082);transform-origin:left center;color:#555;font-weight:bold">-------</div>
<div class="t" style="left:353.1px;top:232.27px;font-size:4.7px;transform:scaleX(0.977);transform-origin:left center;color:#262626">NORMAL</div>
<div class="t" style="left:381.9px;top:232.31px;font-size:4.8px;color:#262626;font-weight:bold">+</div>
<div class="t" style="left:394.7px;top:232.31px;font-size:4.8px;transform:scaleX(1.049);transform-origin:left center;color:#262626">1.00</div>
<div class="t" style="left:422.9px;top:232.27px;font-size:4.7px;color:#262626;white-space:pre">- - +</div>
<div class="t" style="left:465.5px;top:232.24px;font-size:4.6px;transform:scaleX(1.120);transform-origin:left center;color:#555;font-weight:bold">-------</div>
<svg style="left:257.3px;top:243.7px;" width="5.4" height="5.4" viewBox="0 0 5.4 5.4"><rect x=".3" y=".3" width="4.8" height="4.8" fill="#fff" stroke="#555" stroke-width=".65"/><path d="M1.2 2.8l1.2 1.3 2-2.7" fill="none" stroke="#555" stroke-width=".75"/></svg>
<div class="t" style="left:264.7px;top:240.96px;font-size:4.9px;color:#262626;font-weight:bold">11</div>
<div class="t" style="left:275.1px;top:240.86px;font-size:4.6px;transform:scaleX(1.008);transform-origin:left center;color:#555;font-weight:bold">-------</div>
<div class="t" style="left:294.7px;top:240.86px;font-size:4.6px;transform:scaleX(1.138);transform-origin:left center;color:#555;font-weight:bold">-------</div>
<div class="t" style="left:324.1px;top:240.86px;font-size:4.6px;transform:scaleX(1.082);transform-origin:left center;color:#555;font-weight:bold">-------</div>
<div class="t" style="left:353.1px;top:240.89px;font-size:4.7px;transform:scaleX(0.977);transform-origin:left center;color:#262626">NORMAL</div>
<div class="t" style="left:381.9px;top:240.93px;font-size:4.8px;color:#262626">-</div>
<div class="t" style="left:394.7px;top:240.93px;font-size:4.8px;transform:scaleX(1.049);transform-origin:left center;color:#262626">1.00</div>
<div class="t" style="left:422.9px;top:240.89px;font-size:4.7px;color:#262626;white-space:pre">- - +</div>
<div class="t" style="left:465.5px;top:240.86px;font-size:4.6px;transform:scaleX(1.120);transform-origin:left center;color:#555;font-weight:bold">-------</div>
<svg style="left:257.3px;top:252.32px;" width="5.4" height="5.4" viewBox="0 0 5.4 5.4"><rect x=".3" y=".3" width="4.8" height="4.8" fill="#fff" stroke="#555" stroke-width=".65"/><path d="M1.2 2.8l1.2 1.3 2-2.7" fill="none" stroke="#555" stroke-width=".75"/></svg>
<div class="t" style="left:264.7px;top:249.58px;font-size:4.9px;color:#262626;font-weight:bold">12</div>
<div class="t" style="left:275.1px;top:249.48px;font-size:4.6px;transform:scaleX(1.008);transform-origin:left center;color:#555;font-weight:bold">-------</div>
<div class="t" style="left:294.7px;top:249.48px;font-size:4.6px;transform:scaleX(1.138);transform-origin:left center;color:#555;font-weight:bold">-------</div>
<div class="t" style="left:324.1px;top:249.48px;font-size:4.6px;transform:scaleX(1.082);transform-origin:left center;color:#555;font-weight:bold">-------</div>
<div class="t" style="left:353.1px;top:249.51px;font-size:4.7px;transform:scaleX(0.977);transform-origin:left center;color:#262626">NORMAL</div>
<div class="t" style="left:381.9px;top:249.55px;font-size:4.8px;color:#262626;font-weight:bold">+</div>
<div class="t" style="left:394.7px;top:249.55px;font-size:4.8px;transform:scaleX(1.049);transform-origin:left center;color:#262626">1.50</div>
<div class="t" style="left:422.9px;top:249.51px;font-size:4.7px;color:#262626;white-space:pre">+ - -</div>
<div class="t" style="left:465.5px;top:249.48px;font-size:4.6px;transform:scaleX(1.120);transform-origin:left center;color:#555;font-weight:bold">-------</div>
<svg style="left:257.3px;top:260.94px;" width="5.4" height="5.4" viewBox="0 0 5.4 5.4"><rect x=".3" y=".3" width="4.8" height="4.8" fill="#fff" stroke="#555" stroke-width=".65"/><path d="M1.2 2.8l1.2 1.3 2-2.7" fill="none" stroke="#555" stroke-width=".75"/></svg>
<div class="t" style="left:264.7px;top:258.2px;font-size:4.9px;color:#262626;font-weight:bold">13</div>
<div class="t" style="left:275.1px;top:258.1px;font-size:4.6px;transform:scaleX(1.008);transform-origin:left center;color:#555;font-weight:bold">-------</div>
<div class="t" style="left:294.7px;top:258.1px;font-size:4.6px;transform:scaleX(1.138);transform-origin:left center;color:#555;font-weight:bold">-------</div>
<div class="t" style="left:324.1px;top:258.1px;font-size:4.6px;transform:scaleX(1.082);transform-origin:left center;color:#555;font-weight:bold">-------</div>
<div class="t" style="left:353.1px;top:258.13px;font-size:4.7px;transform:scaleX(0.977);transform-origin:left center;color:#262626">NORMAL</div>
<div class="t" style="left:381.9px;top:258.17px;font-size:4.8px;color:#262626">-</div>
<div class="t" style="left:394.7px;top:258.17px;font-size:4.8px;transform:scaleX(1.049);transform-origin:left center;color:#262626">1.50</div>
<div class="t" style="left:422.9px;top:258.13px;font-size:4.7px;color:#262626;white-space:pre">+ - -</div>
<div class="t" style="left:465.5px;top:258.1px;font-size:4.6px;transform:scaleX(1.120);transform-origin:left center;color:#555;font-weight:bold">-------</div>
<svg style="left:257.3px;top:269.56px;" width="5.4" height="5.4" viewBox="0 0 5.4 5.4"><rect x=".3" y=".3" width="4.8" height="4.8" fill="#fff" stroke="#555" stroke-width=".65"/><path d="M1.2 2.8l1.2 1.3 2-2.7" fill="none" stroke="#555" stroke-width=".75"/></svg>
<div class="t" style="left:264.7px;top:266.82px;font-size:4.9px;color:#262626;font-weight:bold">14</div>
<div class="t" style="left:275.1px;top:266.72px;font-size:4.6px;transform:scaleX(1.008);transform-origin:left center;color:#555;font-weight:bold">-------</div>
<div class="t" style="left:294.7px;top:266.72px;font-size:4.6px;transform:scaleX(1.138);transform-origin:left center;color:#555;font-weight:bold">-------</div>
<div class="t" style="left:324.1px;top:266.72px;font-size:4.6px;transform:scaleX(1.082);transform-origin:left center;color:#555;font-weight:bold">-------</div>
<div class="t" style="left:353.1px;top:266.75px;font-size:4.7px;transform:scaleX(0.977);transform-origin:left center;color:#262626">NORMAL</div>
<div class="t" style="left:381.9px;top:266.79px;font-size:4.8px;color:#262626;font-weight:bold">+</div>
<div class="t" style="left:394.7px;top:266.79px;font-size:4.8px;transform:scaleX(1.049);transform-origin:left center;color:#262626">1.50</div>
<div class="t" style="left:422.9px;top:266.75px;font-size:4.7px;color:#262626;white-space:pre">- - +</div>
<div class="t" style="left:465.5px;top:266.72px;font-size:4.6px;transform:scaleX(1.120);transform-origin:left center;color:#555;font-weight:bold">-------</div>
<div style="left:254.9px;top:276.7px;width:260.8px;height:7.6px;background:#f0f0f0"></div>
<div style="left:262.5px;top:277.3px;width:232.8px;height:6.4px;background:#c6c6c6"></div>
<svg style="left:257.1px;top:278.7px;" width="2.2" height="3.4" viewBox="0 0 2.2 3.4"><path d="M1.9 .3l-1.5 1.4 1.5 1.4" fill="none" stroke="#444" stroke-width=".7"/></svg>
<svg style="left:504.1px;top:278.7px;" width="2.2" height="3.4" viewBox="0 0 2.2 3.4"><path d="M.3 .3l1.5 1.4-1.5 1.4z" fill="#333" stroke="#333" stroke-width=".5"/></svg>
<div style="left:17px;top:66px;width:51px;height:12px;background:#f5f5f5;border-left:.9px solid #8a8a8a;border-top:.8px solid #dedede"></div>
<div style="left:68px;top:66px;width:50.8px;height:11.2px;background:#eeeeee;border-right:.9px solid #6f6f6f;border-bottom:.9px solid #6f6f6f;border-top:.7px solid #dcdcdc"></div>
<div class="t" style="left:-108px;width:300px;text-align:center;top:65.64px;font-size:5.1px;font-weight:bold;color:#222"><span style="display:inline-block;transform:scaleX(1.078);transform-origin:center center;">STANDARD</span></div>
<div class="t" style="left:-56.6px;width:300px;text-align:center;top:65.24px;font-size:5.1px;font-weight:bold;color:#222"><span style="display:inline-block;transform:scaleX(1.051);transform-origin:center center;">MANUAL</span></div>
<div style="left:16.4px;top:78.4px;width:31px;height:12px;background:#fbfbfb"></div>
<div class="t" style="left:19.7px;top:78.09px;font-size:4.7px;transform:scaleX(1.025);transform-origin:left center;color:#222">AC LINE</div>
<div class="t" style="left:50.3px;top:78.89px;font-size:4.7px;transform:scaleX(1.032);transform-origin:left center;color:#333">DC LINE</div>
<div class="t" style="left:81.1px;top:78.89px;font-size:4.7px;transform:scaleX(0.949);transform-origin:left center;color:#333">ENCLOSURE</div>
<div style="left:19.8px;top:92.4px;width:132.6px;height:22.2px;border:.7px solid #cfcfcf"></div>
<div style="left:20.4px;top:93px;width:34.2px;height:21px;background:#d9d9ef"></div>
<div class="t" style="left:-112.6px;width:300px;text-align:center;top:97.59px;font-size:4.7px;color:#2a2a3a"><span style="display:inline-block;transform:scaleX(1.051);transform-origin:center center;">出力先</span></div>
<div style="left:70.8px;top:98.4px;width:65.8px;height:10px;background:linear-gradient(#ececec,#dcdcdc);border:.5px solid #cfcfcf"></div>
<div class="t" style="left:72.6px;top:97.4px;font-size:5px;transform:scaleX(1.011);transform-origin:left center;color:#222">単相 L , N</div>
<svg style="left:130.2px;top:102.6px;" width="4" height="2.6" viewBox="0 0 4 2.6"><path d="M.4 .4l1.6 1.6 1.6-1.6" fill="none" stroke="#555" stroke-width=".6"/></svg>
<div style="left:19.8px;top:115.8px;width:132.6px;height:86.2px;border:.7px solid #cfcfcf"></div>
<div style="left:20.4px;top:116.4px;width:34.2px;height:85px;background:#d9d9ef"></div>
<div class="t" style="left:-112.6px;width:300px;text-align:center;top:153.29px;font-size:4.7px;color:#2a2a3a"><span style="display:inline-block;transform:scaleX(1.051);transform-origin:center center;">接続図</span></div>
<svg style="left:64.1px;top:117.8px;" width="78.6" height="83.4" viewBox="0 0 78.6 83.4"><rect x="0" y="0" width="78.6" height="83.4" fill="#fff"/><rect x="0" y="0" width="76.2" height="71.7" fill="#424b5d"/><path d="M0 50.9h76.2M41.7 50.9v20.8" stroke="#aeb4c2" stroke-width=".6"/><path d="M11.6 8v37M31.3 8v37" stroke="#9aa1b3" stroke-width=".6"/><path d="M8 11.6h30.5l4.6 -2.4M8 18.5h33l12.5 -.6M8 41.7h29l7 2" stroke="#efcf22" stroke-width="1.2" fill="none"/><rect x="6.9" y="9.9" width="9.3" height="3.4" rx=".8" fill="#f2d425"/><rect x="10.3" y="10.9" width="2.4" height="1.4" fill="#8a7a20" opacity=".6"/><rect x="26.6" y="9.9" width="9.3" height="3.4" rx=".8" fill="#f2d425"/><rect x="30.0" y="10.9" width="2.4" height="1.4" fill="#8a7a20" opacity=".6"/><rect x="6.9" y="16.8" width="9.3" height="3.4" rx=".8" fill="#f2d425"/><rect x="10.3" y="17.8" width="2.4" height="1.4" fill="#8a7a20" opacity=".6"/><rect x="26.6" y="16.8" width="9.3" height="3.4" rx=".8" fill="#f2d425"/><rect x="30.0" y="17.8" width="2.4" height="1.4" fill="#8a7a20" opacity=".6"/><rect x="6.9" y="40.0" width="9.3" height="3.4" rx=".8" fill="#f2d425"/><rect x="10.3" y="41.0" width="2.4" height="1.4" fill="#8a7a20" opacity=".6"/><rect x="26.6" y="40.0" width="9.3" height="3.4" rx=".8" fill="#f2d425"/><rect x="30.0" y="41.0" width="2.4" height="1.4" fill="#8a7a20" opacity=".6"/><text x="1" y="5.4" font-size="3.7" font-weight="bold" fill="#f0d224" font-family="Liberation Sans,sans-serif" textLength="39.6" lengthAdjust="spacingAndGlyphs">&#9888; EUT LINE OUTPUT &#9888;</text><rect x="7.4" y="6.6" width="8" height="1.8" fill="none" stroke="#aab0c0" stroke-width=".4"/><rect x="27.2" y="6.6" width="8" height="1.8" fill="none" stroke="#aab0c0" stroke-width=".4"/><circle cx="48.3" cy="7.9" r="5.6" fill="#15151a" stroke="#d9b91c" stroke-width="1.1"/><circle cx="58.6" cy="17.7" r="5.6" fill="#15151a" stroke="#d9b91c" stroke-width="1.1"/><circle cx="49.8" cy="44.7" r="6.6" fill="#15151a" stroke="#d9b91c" stroke-width="1.1"/><circle cx="49.8" cy="44.7" r="3.2" fill="#26262c"/><rect x="56.8" y="6.799999999999999" width="21.799999999999997" height="2.8" fill="#4c4c50"/><rect x="56.8" y="6.799999999999999" width="21.799999999999997" height=".9" fill="#7d8a8a"/><path d="M48.1 5.1Q45.5 8.2 48.1 11.299999999999999L54.5 10.899999999999999L58.8 8.7L58.8 7.699999999999999L54.5 5.499999999999999Z" fill="#b5121b"/><path d="M49.5 5.3999999999999995v5.6M51.3 5.3999999999999995v5.6M53.1 5.499999999999999v5.4" stroke="#7d0d14" stroke-width=".6"/><rect x="66.8" y="15.700000000000001" width="11.799999999999997" height="2.8" fill="#4c4c50"/><rect x="66.8" y="15.700000000000001" width="11.799999999999997" height=".9" fill="#7d8a8a"/><path d="M58.5 14.000000000000002Q55.9 17.1 58.5 20.200000000000003L64.89999999999999 19.8L68.8 17.6L68.8 16.6L64.89999999999999 14.400000000000002Z" fill="#b5121b"/><path d="M59.9 14.3v5.6M61.699999999999996 14.3v5.6M63.5 14.400000000000002v5.4" stroke="#7d0d14" stroke-width=".6"/><rect x="15" y="47.4" width="15" height="1" fill="#d7dae2" opacity=".75"/><rect x="15" y="48.9" width="15" height="1" fill="#d7dae2" opacity=".6"/><rect x="67.2" y="49.6" width="8" height="3" fill="#424b5d" stroke="#e8eaf0" stroke-width=".7"/><path d="M69 51.1h4.4" stroke="#e8eaf0" stroke-width=".7"/><text x="1.6" y="58.2" font-size="3.7" font-weight="bold" fill="#f0d224" font-family="Liberation Sans,sans-serif" textLength="36.6" lengthAdjust="spacingAndGlyphs">&#9888; SURGE OUTPUT &#9888;</text><circle cx="10.9" cy="64.8" r="4.7" fill="#b2141a" stroke="#dcbc1c" stroke-width="1.3"/><circle cx="10.9" cy="64.8" r="1.7" fill="#3a0808"/><circle cx="31.3" cy="64.8" r="4.7" fill="#15151a" stroke="#dcbc1c" stroke-width="1.3"/><circle cx="31.3" cy="64.8" r="1.7" fill="#4a4a50"/><rect x="52.5" y="55.8" width="13.9" height="1.9" fill="#dfe2ea"/><path d="M47.199999999999996 61.4l5.2 6.8M52.4 61.4l-5.2 6.8" stroke="#c9cdd8" stroke-width="1"/><rect x="46.199999999999996" y="60" width="2" height="2" fill="#d9dce4"/><rect x="51.4" y="60" width="2" height="2" fill="#d9dce4"/><rect x="46.199999999999996" y="67.4" width="2" height="2" fill="#d9dce4"/><rect x="51.4" y="67.4" width="2" height="2" fill="#d9dce4"/><path d="M64.5 61.4l5.2 6.8M69.69999999999999 61.4l-5.2 6.8" stroke="#c9cdd8" stroke-width="1"/><rect x="63.49999999999999" y="60" width="2" height="2" fill="#d9dce4"/><rect x="68.69999999999999" y="60" width="2" height="2" fill="#d9dce4"/><rect x="63.49999999999999" y="67.4" width="2" height="2" fill="#d9dce4"/><rect x="68.69999999999999" y="67.4" width="2" height="2" fill="#d9dce4"/><rect x="3.9" y="74.1" width="35.5" height="8.1" fill="#f4d61f" stroke="#3a3305" stroke-width=".5"/><path d="M8.4 75.3l2.9 5.3h-5.8z" fill="none" stroke="#111" stroke-width=".6"/><path d="M14 76.2h23.6M14 78.2h23.6M14 80.2h17" stroke="#2a2a10" stroke-width=".9"/></svg>
<div style="left:19.8px;top:207.6px;width:68.8px;height:33.8px;border:.7px solid #cfcfcf"></div>
<div style="left:20.4px;top:208.2px;width:67.6px;height:13.6px;background:#d9d9ef"></div>
<svg style="left:20.6px;top:208.6px;" width="11.6" height="12.6" viewBox="0 0 12 12"><path d="M1.2 .4v10.8h9.4" fill="none" stroke="#1a1a3a" stroke-width="1"/><path d="M1.4 1.4c2 4 5 7.4 9 9.6" fill="none" stroke="#1a1a3a" stroke-width="1"/><path d="M11.2 .4v11" stroke="#1a1a3a" stroke-width="1"/></svg>
<div class="t" style="left:34.4px;top:209.33px;font-size:4.8px;transform:scaleX(1.117);transform-origin:left center;color:#222">電圧(NORMAL)</div>
<div style="left:34.6px;top:226px;width:21px;height:10px;background:#fff;border:.5px solid #d6d6d6"></div>
<div class="t" style="left:36.2px;top:225.93px;font-size:4.8px;color:#222">0.50</div>
<div style="left:50.8px;top:226.5px;width:4.3px;height:9px;background:#f1f1f1;border-left:.5px solid #d0d0d0"></div>
<svg style="left:51.8px;top:228px;" width="2.8" height="2" viewBox="0 0 2.8 2"><path d="M.2 1.8l1.2-1.4 1.2 1.4z" fill="#222"/></svg>
<svg style="left:51.8px;top:232px;" width="2.8" height="2" viewBox="0 0 2.8 2"><path d="M.2 .2l1.2 1.4 1.2-1.4z" fill="#222"/></svg>
<div class="t" style="left:58.4px;top:225px;font-size:5px;transform:scaleX(1.061);transform-origin:left center;">kV</div>
<div style="left:19.8px;top:243.8px;width:81.8px;height:39.6px;border:.7px solid #cfcfcf"></div>
<div style="left:20.4px;top:244.4px;width:22.2px;height:38.4px;background:#d9d9ef"></div>
<svg style="left:21.4px;top:248.6px;" width="19.4" height="20" viewBox="0 0 14 14"><path d="M1 0.5v12.6h12.2" fill="none" stroke="#1a1a3a" stroke-width=".9"/><path d="M1 13c.8-7 1.6-11.6 2.8-11.6 1.6 0 3 8.2 9 11.4" fill="none" stroke="#1a1a3a" stroke-width=".9"/></svg>
<div class="t" style="left:-118.6px;width:300px;text-align:center;top:272.29px;font-size:4.7px;"><span style="display:inline-block;transform:scaleX(1.022);transform-origin:center center;">波形</span></div>
<div style="left:45.6px;top:249px;width:43px;height:9px;background:linear-gradient(#ececec,#dcdcdc);border:.5px solid #cfcfcf"></div>
<div class="t" style="left:47.4px;top:248.22px;font-size:4.5px;transform:scaleX(1.119);transform-origin:left center;color:#222">1.2/50</div>
<svg style="left:83px;top:253.2px;" width="4" height="2.6" viewBox="0 0 4 2.6"><path d="M.4 .4l1.6 1.6 1.6-1.6" fill="none" stroke="#555" stroke-width=".6"/></svg>
<div style="left:104px;top:243.8px;width:64px;height:24px;border:.7px solid #cfcfcf"></div>
<div style="left:104.6px;top:244.4px;width:25.8px;height:22.8px;background:#d9d9ef"></div>
<svg style="left:113.4px;top:245.2px;" width="8.4" height="13.2" viewBox="0 0 8.4 13.2"><path d="M3 .2h4.6l-2 4.8h2.6l-5.8 8 1.6-6.2h-3z" fill="#14142e"/></svg>
<div class="t" style="left:-32.4px;width:300px;text-align:center;top:257.46px;font-size:4.6px;"><span style="display:inline-block;transform:scaleX(1.098);transform-origin:center center;">放電回数</span></div>
<div style="left:135.2px;top:250.6px;width:27.6px;height:9.4px;background:#fff;border:.5px solid #d6d6d6"></div>
<div class="t" style="left:136.8px;top:250.16px;font-size:4.6px;color:#222">5</div>
<div style="left:158px;top:251.1px;width:4.3px;height:8.4px;background:#f1f1f1;border-left:.5px solid #d0d0d0"></div>
<svg style="left:159px;top:252.3px;" width="2.8" height="2" viewBox="0 0 2.8 2"><path d="M.2 1.8l1.2-1.4 1.2 1.4z" fill="#222"/></svg>
<svg style="left:159px;top:256.3px;" width="2.8" height="2" viewBox="0 0 2.8 2"><path d="M.2 .2l1.2 1.4 1.2-1.4z" fill="#222"/></svg>
<div style="left:170.2px;top:243.8px;width:73.8px;height:24px;border:.7px solid #cfcfcf"></div>
<div style="left:170.8px;top:244.4px;width:26.2px;height:22.8px;background:#d9d9ef"></div>
<svg style="left:177.2px;top:245.2px;" width="13.6" height="13.2" viewBox="0 0 13.6 13.2"><path d="M3.2 3.2a5.1 5.1 0 1 0 3.6-1.5" fill="none" stroke="#14142e" stroke-width="1.6"/><path d="M.8 1.2l3.6-.6-.4 3.8z" fill="#14142e"/><path d="M4.8 6.4l1.9 1.8 2.6-2.9" fill="none" stroke="#14142e" stroke-width=".9"/></svg>
<div class="t" style="left:34px;width:300px;text-align:center;top:257.46px;font-size:4.6px;"><span style="display:inline-block;transform:scaleX(1.077);transform-origin:center center;">放電間隔</span></div>
<div style="left:201.2px;top:250.6px;width:22.4px;height:9.4px;background:#fff;border:.5px solid #d6d6d6"></div>
<div class="t" style="left:202.8px;top:250.16px;font-size:4.6px;color:#222">60</div>
<div style="left:218.8px;top:251.1px;width:4.3px;height:8.4px;background:#f1f1f1;border-left:.5px solid #d0d0d0"></div>
<svg style="left:219.8px;top:252.3px;" width="2.8" height="2" viewBox="0 0 2.8 2"><path d="M.2 1.8l1.2-1.4 1.2 1.4z" fill="#222"/></svg>
<svg style="left:219.8px;top:256.3px;" width="2.8" height="2" viewBox="0 0 2.8 2"><path d="M.2 .2l1.2 1.4 1.2-1.4z" fill="#222"/></svg>
<div class="t" style="left:227.2px;top:250.06px;font-size:4.6px;">秒</div>
</div>
<div style="left:247.1px;top:82.7px;width:510px;height:284.2px;background:#fff"></div>
<svg style="left:259.1px;top:86.5px;" width="3.2" height="3.6" viewBox="0 0 3.2 3.6"><path d="M1.6 .2l1.3 1.6-1.3 1.6-1.3-1.6z" fill="#222"/></svg>
<div class="t" style="left:263.9px;top:82.1px;font-size:5px;transform:scaleX(1.018);transform-origin:left center;color:#222">無題</div>
<div class="t" style="left:275.5px;top:83.02px;font-size:4.5px;transform:scaleX(0.954);transform-origin:left center;color:#333;text-shadow:none">- LSS-6330 RemoteW</div>
<div style="left:710.7px;top:88px;width:4.2px;height:0.7px;background:#555"></div>
<svg style="left:728.1px;top:85.9px;" width="5" height="5" viewBox="0 0 5 5"><rect x=".5" y=".5" width="4" height="4" fill="none" stroke="#444" stroke-width=".7"/></svg>
<svg style="left:746.7px;top:86.1px;" width="4.6" height="4.6" viewBox="0 0 4.6 4.6"><path d="M.4 .4l3.8 3.8M4.2 .4l-3.8 3.8" stroke="#333" stroke-width=".8"/></svg>
<div style="left:247.1px;top:93.2px;width:510px;height:9.7px;background:#dbe5f3"></div>
<div style="left:247.3px;top:94.1px;width:20.6px;height:8.4px;background:linear-gradient(#2863b8,#123f8f);border-radius:1px"></div>
<div style="left:253.5px;top:95.7px;width:5.2px;height:5.4px;background:#f2f5fb"></div>
<svg style="left:253.5px;top:95.7px;" width="5.2" height="5.4" viewBox="0 0 5.2 5.4"><path d="M1 1.6h1.2M3 1.6h1.2M1 3.4h1.2M3 3.4h1.2" stroke="#111" stroke-width="1"/></svg>
<div class="t" style="left:259.7px;top:92.9px;font-size:3.6px;color:#e8b070;font-weight:bold">OH</div>
<div class="t" style="left:249.1px;top:92.8px;font-size:3.6px;color:#9fc0f0;font-weight:bold">H</div>
<div style="left:269.1px;top:93.7px;width:22.6px;height:9.4px;background:#f3f7fc;border:.5px solid #d3deed;border-bottom:none;border-radius:1.2px 1.2px 0 0"></div>
<div class="t" style="left:130.9px;width:300px;text-align:center;top:93.56px;font-size:4.9px;color:#222"><span style="display:inline-block;transform:scaleX(0.950);transform-origin:center center;">ホーム</span></div>
<div class="t" style="left:727.1px;top:92.28px;font-size:4.4px;transform:scaleX(0.853);transform-origin:left center;color:#222">スタイル</div>
<svg style="left:744.7px;top:96.9px;" width="3" height="2" viewBox="0 0 3 2"><path d="M.2 .2h2.4l-1.2 1.4z" fill="#222"/></svg>
<div style="left:751.1px;top:95.9px;width:4.2px;height:4.2px;border-radius:50%;background:radial-gradient(circle at 40% 35%,#8fb6ff,#1f56c8)"></div>
<div style="left:247.1px;top:102.9px;width:510px;height:34.4px;background:linear-gradient(#f6f9fd 0%,#ecf2fa 8%,#e4edf8 45%,#d6e2f2 88%,#dbe5f3 100%)"></div>
<div style="left:333.4px;top:105.1px;width:0.7px;height:31.5px;background:linear-gradient(rgba(200,212,230,.1),rgba(186,200,222,.7))"></div>
<div style="left:462.4px;top:105.1px;width:0.7px;height:31.5px;background:linear-gradient(rgba(200,212,230,.1),rgba(186,200,222,.7))"></div>
<div style="left:567.6px;top:105.1px;width:0.7px;height:31.5px;background:linear-gradient(rgba(200,212,230,.1),rgba(186,200,222,.7))"></div>
<svg style="left:256.3px;top:105.7px;" width="10" height="12.5" viewBox="0 0 10 12.5"><path d="M0.6 0.5h5.6l3.2 3.2v8.3h-8.8z" fill="#fbfcff" stroke="#a9b4c8" stroke-width=".8"/><path d="M6.2 .5v3.2h3.2" fill="#d5deee" stroke="#a9b4c8" stroke-width=".7"/><path d="M1.4 11.4h7.2" stroke="#d3dbea" stroke-width=".8"/></svg>
<svg style="left:274.7px;top:106.7px;" width="12.4" height="10.4" viewBox="0 0 12.4 10.4"><path d="M.5 9.8v-7.6h3.2l1 1.2h4.8v6.4z" fill="#e3ae3a" stroke="#b88720" stroke-width=".5"/><path d="M7.6 1.8l1.6-1.5 1.8 1.3-1 .2.6 1.4-1.2.4-.6-1.5z" fill="#2a3f7a"/><path d="M.5 9.8l2.3-5.4h9.2l-2.5 5.4z" fill="#f6d262" stroke="#c79a2c" stroke-width=".5"/></svg>
<svg style="left:296.1px;top:106.3px;" width="12" height="11" viewBox="0 0 12 11"><rect x=".2" y=".2" width="10.4" height="10.6" fill="#5b4bb8"/><rect x="3" y="0" width="5" height="4.6" fill="#f6f6fd"/><rect x="2.4" y="7.4" width="6.2" height="3.6" fill="#f1f1fa"/><rect x="3.4" y="8" width="1.6" height="2.6" fill="#5b4bb8"/></svg>
<svg style="left:317.3px;top:106.3px;" width="12" height="11" viewBox="0 0 12 11"><rect x=".2" y=".2" width="10.4" height="10.6" fill="#5b4bb8"/><rect x="3" y="0" width="5" height="4.6" fill="#f6f6fd"/><rect x="2.4" y="7.4" width="6.2" height="3.6" fill="#f1f1fa"/><rect x="3.4" y="8" width="1.6" height="2.6" fill="#5b4bb8"/><path d="M4.2 2.6l6.2 7 1.4.4-.3-1.6-6.1-6.8z" fill="#e9bd3e" stroke="#86661a" stroke-width=".4"/><path d="M10.6 9.8l1.3.3-.4-1.4z" fill="#333"/></svg>
<svg style="left:342.9px;top:106.1px;" width="11" height="11" viewBox="0 0 11 11"><rect x="3.5" y="1" width="7" height="9" fill="#fff" stroke="#2d7d46" stroke-width=".6"/><path d="M6 3h3.6M6 5h3.6M6 7h3.6M6 8.8h3.6" stroke="#2d7d46" stroke-width=".7"/><rect x=".3" y="2" width="6" height="7" fill="#1f7a43"/><path d="M1.8 3.6l3 3.9M4.8 3.6l-3 3.9" stroke="#fff" stroke-width="1"/></svg>
<svg style="left:362.1px;top:105.5px;" width="12" height="12" viewBox="0 0 12 12"><rect x="1.5" y="3" width="10" height="8.6" fill="#9ab6e6" stroke="#4a6fb5" stroke-width=".6"/><rect x="1.5" y="3" width="10" height="2" fill="#3f66b3"/><rect x="3" y="6.3" width="7" height="4" fill="#dfe9fa"/><path d="M1 5.2c0-3 1-4.2 2.4-4.2s2.4 1.2 2.4 4.2l.7 1h-6.2z" fill="#f1c232" stroke="#9b7a12" stroke-width=".4"/><circle cx="3.4" cy="6.6" r=".7" fill="#9b7a12"/></svg>
<svg style="left:380.3px;top:105.9px;" width="13" height="12" viewBox="0 0 13 12"><circle cx="8" cy="6.4" r="4.7" fill="#f7f7f7" stroke="#9aa3ad" stroke-width=".8"/><path d="M8 3.4v3.2h2.6" stroke="#777" stroke-width=".7" fill="none"/><path d="M.3 5.6l4-3.6v2.2h3.2v2.8h-3.2v2.2z" fill="#3fae49" stroke="#1f7a2b" stroke-width=".4"/></svg>
<svg style="left:402.3px;top:105.3px;" width="10" height="12" viewBox="0 0 10 12"><path d="M2.6 5.5v-2.2a2.4 2.4 0 0 1 4.8 0v2.2" fill="none" stroke="#c9a227" stroke-width="1.3"/><rect x=".8" y="5.2" width="8.4" height="6.3" rx=".8" fill="#f0b429" stroke="#b07c10" stroke-width=".5"/><rect x="4.3" y="7.2" width="1.4" height="2.4" fill="#7a5607"/></svg>
<svg style="left:422.7px;top:105.9px;" width="12" height="12" viewBox="0 0 12 12"><rect x="4.6" y="-.2" width="2.8" height="12.4" transform="rotate(0 6 6)" fill="#1b1b1b"/><rect x="4.6" y="-.2" width="2.8" height="12.4" transform="rotate(45 6 6)" fill="#1b1b1b"/><rect x="4.6" y="-.2" width="2.8" height="12.4" transform="rotate(90 6 6)" fill="#1b1b1b"/><rect x="4.6" y="-.2" width="2.8" height="12.4" transform="rotate(135 6 6)" fill="#1b1b1b"/><circle cx="6" cy="6" r="4.3" fill="#1b1b1b"/><circle cx="6" cy="6" r="2.7" fill="#e4ecf6"/><circle cx="6" cy="6" r="1.3" fill="#1b1b1b"/></svg>
<svg style="left:443.1px;top:106.7px;" width="14" height="11" viewBox="0 0 14 11"><path d="M6.5 1.2h6.6v7.6h-6.6" fill="#fff" stroke="#222" stroke-width="1"/><path d="M.8 1.2h5.7v7.6h-5.7z" fill="#fff" stroke="#222" stroke-width="1"/><circle cx="3.4" cy="7.2" r="3" fill="#222"/><text x="3.4" y="9" font-size="4.6" font-family="Liberation Sans,sans-serif" font-weight="bold" fill="#fff" text-anchor="middle">?</text></svg>
<div class="t" style="left:251.3px;top:117.06px;font-size:4.9px;transform:scaleX(1.022);transform-origin:left center;">新規作成</div>
<div class="t" style="left:276.5px;top:117.06px;font-size:4.9px;transform:scaleX(0.857);transform-origin:left center;">開く</div>
<div class="t" style="left:290.1px;top:117.06px;font-size:4.9px;transform:scaleX(0.981);transform-origin:left center;">上書き保存</div>
<div class="t" style="left:318.5px;top:117.06px;font-size:4.9px;transform:scaleX(1.041);transform-origin:left center;">保存</div>
<div class="t" style="left:337.1px;top:117.06px;font-size:4.9px;transform:scaleX(0.899);transform-origin:left center;">データ出力</div>
<div class="t" style="left:361.1px;top:117.06px;font-size:4.9px;transform:scaleX(0.980);transform-origin:left center;">校正日</div>
<div class="t" style="left:377.3px;top:117.06px;font-size:4.9px;transform:scaleX(0.909);transform-origin:left center;">試験ログ</div>
<div class="t" style="left:397.1px;top:117.06px;font-size:4.9px;transform:scaleX(1.001);transform-origin:left center;">設定保護</div>
<div class="t" style="left:419.1px;top:117.06px;font-size:4.9px;transform:scaleX(0.777);transform-origin:left center;">オプション</div>
<div class="t" style="left:439.9px;top:117.06px;font-size:4.9px;transform:scaleX(0.781);transform-origin:left center;">マニュアル</div>
<div class="t" style="left:284.5px;top:128.56px;font-size:4.6px;transform:scaleX(0.794);transform-origin:left center;color:#222">ファイル</div>
<div class="t" style="left:393.7px;top:128.56px;font-size:4.6px;transform:scaleX(1.021);transform-origin:left center;color:#222">機能</div>
<div class="t" style="left:506.1px;top:128.56px;font-size:4.6px;transform:scaleX(1.055);transform-origin:left center;color:#222">接続状態</div>
<div class="t" style="left:466.1px;top:107.59px;font-size:4.7px;transform:scaleX(0.983);transform-origin:left center;">接続モデル :</div>
<div class="t" style="left:466.1px;top:116.49px;font-size:4.7px;transform:scaleX(1.058);transform-origin:left center;">接続状態 :</div>
<div style="left:494.1px;top:109.7px;width:53.6px;height:6.8px;background:#fff;border:.5px solid #dfe6f0"></div>
<div class="t" style="left:495.5px;top:107.64px;font-size:4px;transform:scaleX(1.027);transform-origin:left center;color:#444;text-shadow:none">LSS-6330-A20 / A20A</div>
<svg style="left:543.7px;top:112.5px;" width="2.6" height="1.8" viewBox="0 0 2.6 1.8"><path d="M.1 .1h2.4l-1.2 1.5z" fill="#222"/></svg>
<div style="left:492.3px;top:118px;width:57px;height:6.7px;background:#fff;border:.5px solid #d5deea"></div>
<div class="t" style="left:494.3px;top:116.19px;font-size:4.7px;transform:scaleX(1.009);transform-origin:left center;color:#222">未接続</div>
<svg style="left:553.3px;top:108.9px;" width="11" height="6.4" viewBox="0 0 11 6.4"><path d="M5.2 1H3.3a2.2 2.2 0 0 0 0 4.4H4M5.8 5.4h1.9a2.2 2.2 0 0 0 0-4.4H7M3.4 3.2h4.2" fill="none" stroke="#1b1b1b" stroke-width="1.5" stroke-linecap="round"/></svg>
<div class="t" style="left:553.7px;top:116.93px;font-size:4.8px;transform:scaleX(0.978);transform-origin:left center;">接続</div>
<div style="left:247.1px;top:139.1px;width:510px;height:227.6px;background:#f3f3f3"></div>
<div style="left:247.1px;top:137.3px;width:510px;height:2.2px;background:linear-gradient(#d3deee 0%,#a9b0bb 45%,#9da3ac 70%,#c4c7cc 100%)"></div>
<div style="left:247.1px;top:138.7px;width:1px;height:228.6px;background:#8c8c8c"></div>
<div style="left:248.1px;top:139.1px;width:237.2px;height:224.4px;border-bottom:1.2px solid #b4b4b4;border-left:.6px solid #dcdcdc;border-top:1.3px solid #7c7c7c;background:#f0f0f0"></div>
<div style="left:485.3px;top:139.1px;width:2.8px;height:227.6px;background:#c1c1c1"></div>
<div style="left:487.6px;top:141.4px;width:98.6px;height:47px;border:.7px solid #cfcfcf"></div>
<div class="t" style="left:516.2px;top:142.83px;font-size:4.8px;transform:scaleX(1.098);transform-origin:left center;color:#222">試験時間 :</div>
<div class="t" style="left:548.4px;top:142.92px;font-size:5.9px;transform:scaleX(1.118);transform-origin:left center;color:#222;white-space:pre">0h  4m 10s</div>
<div class="t" style="left:496.2px;top:151.23px;font-size:4.8px;transform:scaleX(1.072);transform-origin:left center;color:#222">トータル試験時間 :</div>
<div class="t" style="left:548.4px;top:151.32px;font-size:5.9px;transform:scaleX(1.059);transform-origin:left center;color:#222;white-space:pre">4h 14m 10s</div>
<div class="t" style="left:491px;top:160.43px;font-size:4.8px;transform:scaleX(1.112);transform-origin:left center;color:#222">残り試験時間(目安) :</div>
<div class="t" style="left:548.4px;top:160.52px;font-size:5.9px;transform:scaleX(1.059);transform-origin:left center;color:#222;white-space:pre">4h 18m 20s</div>
<div class="t" style="left:510px;top:169.63px;font-size:4.8px;transform:scaleX(1.020);transform-origin:left center;color:#222">放電間隔[ s ] :</div>
<div class="t" style="left:548.4px;top:169.72px;font-size:5.9px;transform:scaleX(1.310);transform-origin:left center;color:#222;white-space:pre"> 5 /  60</div>
<div class="t" style="left:517px;top:178.43px;font-size:4.8px;transform:scaleX(1.061);transform-origin:left center;color:#222">放電回数 :</div>
<div class="t" style="left:548.4px;top:178.52px;font-size:5.9px;transform:scaleX(1.319);transform-origin:left center;color:#222;white-space:pre"> 0 /   5</div>
<div style="left:588px;top:141.4px;width:127px;height:47px;border:.7px solid #cfcfcf"></div>
<div style="left:596px;top:145.6px;width:14.2px;height:16px;background:#3f3f3f;border:.7px solid #2a2a2a"></div>
<div style="left:590.6px;top:162px;width:24.6px;height:8px;background:#2f8f3c;border:.8px solid #1d5d26"></div>
<div class="t" style="left:617.8px;top:143.32px;font-size:5.6px;transform:scaleX(1.063);transform-origin:left center;color:#222">LINE ON</div>
<div class="t" style="left:617.8px;top:162.22px;font-size:5.6px;transform:scaleX(1.048);transform-origin:left center;color:#222">LINE OFF</div>
<div style="left:652.6px;top:156px;width:28.6px;height:15.6px;background:#d2d2d2"></div>
<div style="left:684px;top:156px;width:29.2px;height:15.6px;background:#d2d2d2"></div>
<svg style="left:662.6px;top:159.8px;" width="9.4" height="9" viewBox="0 0 9.4 9"><path d="M.3 .3l8.6 4.2-8.6 4.2z" fill="#34b233" stroke="#1f8a24" stroke-width=".4"/></svg>
<div style="left:694px;top:160.2px;width:9.2px;height:8px;background:#f01818;border:.5px solid #b80f0f"></div>
<div class="t" style="left:590.6px;top:174.97px;font-size:5.2px;transform:scaleX(1.053);transform-origin:left center;">電圧値</div>
<div style="left:612.8px;top:176.4px;width:26.2px;height:9.4px;background:#f0f0f0;border:.8px solid #bdbdbd"></div>
<div class="t" style="left:615px;top:175.66px;font-size:4.6px;transform:scaleX(1.197);transform-origin:left center;color:#555">------</div>
<div class="t" style="left:642.8px;top:174.94px;font-size:5.4px;transform:scaleX(0.985);transform-origin:left center;">kV</div>
<div class="t" style="left:657px;top:174.97px;font-size:5.2px;transform:scaleX(1.091);transform-origin:left center;">電流値</div>
<div style="left:677px;top:176.4px;width:25.2px;height:9.4px;background:#f0f0f0;border:.8px solid #bdbdbd"></div>
<div class="t" style="left:679px;top:175.66px;font-size:4.6px;transform:scaleX(1.154);transform-origin:left center;color:#555">------</div>
<div class="t" style="left:705.4px;top:174.94px;font-size:5.4px;transform:scaleX(1.016);transform-origin:left center;">kA</div>
<div style="left:717px;top:141.4px;width:33.8px;height:47px;border:.7px solid #cfcfcf"></div>
<div style="left:718.8px;top:150.6px;width:31.2px;height:29.8px;background:#87101a;border:1.7px solid #33383a"></div>
<svg style="left:720.2px;top:152.2px;" width="28" height="27" viewBox="0 0 28 27"><path d="M14 2l12.2 22.2h-24.4z" fill="none" stroke="#9aa638" stroke-width="1.5" stroke-linejoin="round"/><path d="M16.2 6.4L10.4 15.2H13.8L11 23.6L17.8 12.8H14.4L17.6 6.4Z" fill="#9aa638"/></svg>
<div style="left:487.6px;top:190.2px;width:252.8px;height:11.6px;border:.7px solid #cfcfcf"></div>
<div class="t" style="left:490.2px;top:190.73px;font-size:4.8px;transform:scaleX(1.011);transform-origin:left center;">試験開始日時 :</div>
<div style="left:530px;top:191.4px;width:82.8px;height:9.2px;background:#fff;border:.6px solid #c6c6c6"></div>
<div class="t" style="left:532.2px;top:190.58px;font-size:4.4px;transform:scaleX(1.152);transform-origin:left center;color:#333"><span class="d">----</span>年<span class="d">--</span>月<span class="d">--</span>日 <span class="d">--</span>時<span class="d">--</span>分</div>
<svg style="left:603.2px;top:193.4px;" width="8.4" height="5.6" viewBox="0 0 8.4 5.6"><rect x=".3" y=".5" width="4.6" height="4.6" fill="#fff" stroke="#667" stroke-width=".5"/><rect x=".3" y=".5" width="4.6" height="1.3" fill="#8aa0c8"/><path d="M5.8 2.2h2.2l-1.1 1.4z" fill="#333"/></svg>
<div class="t" style="left:617.6px;top:190.73px;font-size:4.8px;transform:scaleX(1.030);transform-origin:left center;">試験終了日時 :</div>
<div style="left:657.8px;top:191.4px;width:81.4px;height:9.2px;background:#fff;border:.6px solid #c6c6c6"></div>
<div class="t" style="left:659.6px;top:190.58px;font-size:4.4px;transform:scaleX(1.152);transform-origin:left center;color:#333"><span class="d">----</span>年<span class="d">--</span>月<span class="d">--</span>日 <span class="d">--</span>時<span class="d">--</span>分</div>
<svg style="left:729px;top:193.4px;" width="8.4" height="5.6" viewBox="0 0 8.4 5.6"><rect x=".3" y=".5" width="4.6" height="4.6" fill="#fff" stroke="#667" stroke-width=".5"/><rect x=".3" y=".5" width="4.6" height="1.3" fill="#8aa0c8"/><path d="M5.8 2.2h2.2l-1.1 1.4z" fill="#333"/></svg>
<div style="left:488.2px;top:203.4px;width:264.2px;height:159px;border:solid #c6c6c6;border-width:.8px 3px 2.8px .8px;background:#f0f0f0"></div>
<div style="left:492px;top:207.4px;width:78.2px;height:11.4px;border:.7px solid #cfcfcf"></div>
<div class="t" style="left:494.6px;top:207.63px;font-size:4.8px;transform:scaleX(0.968);transform-origin:left center;">実行順編集 :</div>
<svg style="left:527px;top:210.3px;" width="5.2" height="5.2" viewBox="0 0 5.2 5.2"><circle cx="2.6" cy="2.6" r="2.25" fill="#fff" stroke="#3c3c3c" stroke-width=".5"/></svg>
<div class="t" style="left:533.6px;top:207.63px;font-size:4.8px;">可</div>
<svg style="left:544px;top:210.3px;" width="5.2" height="5.2" viewBox="0 0 5.2 5.2"><circle cx="2.6" cy="2.6" r="2.25" fill="#fff" stroke="#3c3c3c" stroke-width=".5"/><circle cx="2.6" cy="2.6" r="1.15" fill="#222"/></svg>
<div class="t" style="left:551px;top:207.63px;font-size:4.8px;transform:scaleX(0.937);transform-origin:left center;">不可</div>
<div style="left:573px;top:207.4px;width:84.6px;height:11.4px;border:.7px solid #cfcfcf"></div>
<div class="t" style="left:575.8px;top:207.63px;font-size:4.8px;transform:scaleX(0.860);transform-origin:left center;">開始位置 :</div>
<svg style="left:603.2px;top:210.3px;" width="5.2" height="5.2" viewBox="0 0 5.2 5.2"><circle cx="2.6" cy="2.6" r="2.25" fill="#fff" stroke="#3c3c3c" stroke-width=".5"/></svg>
<div class="t" style="left:610.8px;top:207.63px;font-size:4.8px;transform:scaleX(0.957);transform-origin:left center;">番号</div>
<svg style="left:625.4px;top:210.3px;" width="5.2" height="5.2" viewBox="0 0 5.2 5.2"><circle cx="2.6" cy="2.6" r="2.25" fill="#fff" stroke="#3c3c3c" stroke-width=".5"/><circle cx="2.6" cy="2.6" r="1.15" fill="#222"/></svg>
<div class="t" style="left:632.4px;top:207.63px;font-size:4.8px;transform:scaleX(0.927);transform-origin:left center;">選択箇所</div>
<div style="left:659.6px;top:208px;width:35px;height:9.8px;background:#e9e9e9;border:.7px solid #b9b9b9"></div>
<div class="t" style="left:527.1px;width:300px;text-align:center;top:207.66px;font-size:4.9px;"><span style="display:inline-block;transform:scaleX(0.991);transform-origin:center center;">ログ保存</span></div>
<div style="left:700px;top:209px;width:7.6px;height:7.6px;border-radius:50%;background:#111"></div>
<div class="t" style="left:553.8px;width:300px;text-align:center;top:207.3px;font-size:6.4px;color:#fff;font-weight:bold">?</div>
<div style="left:489px;top:220.2px;width:260.8px;height:139.2px;background:#fff"></div>
<div class="t" style="left:491.6px;top:220.09px;font-size:4.7px;transform:scaleX(1.036);transform-origin:left center;color:#222">Step</div>
<div class="t" style="left:509.2px;top:220.09px;font-size:4.7px;transform:scaleX(1.001);transform-origin:left center;color:#222">判定</div>
<div class="t" style="left:528.4px;top:220.09px;font-size:4.7px;transform:scaleX(1.066);transform-origin:left center;color:#222">電圧値[kV]</div>
<div class="t" style="left:558px;top:220.09px;font-size:4.7px;transform:scaleX(1.048);transform-origin:left center;color:#222">電流値[kA]</div>
<div class="t" style="left:587.2px;top:220.09px;font-size:4.7px;transform:scaleX(0.852);transform-origin:left center;color:#222">モード</div>
<div class="t" style="left:614.2px;top:220.09px;font-size:4.7px;transform:scaleX(1.001);transform-origin:left center;color:#222">極性</div>
<div class="t" style="left:628.8px;top:220.09px;font-size:4.7px;transform:scaleX(1.087);transform-origin:left center;color:#222">電圧 [kV]</div>
<div class="t" style="left:654.6px;top:220.09px;font-size:4.7px;transform:scaleX(1.010);transform-origin:left center;color:#222">印加相-リターン相</div>
<div class="t" style="left:699.2px;top:220.09px;font-size:4.7px;transform:scaleX(1.088);transform-origin:left center;color:#222">位相角 [°]</div>
<div class="t" style="left:726.2px;top:220.09px;font-size:4.7px;transform:scaleX(0.895);transform-origin:left center;color:#222">コメント</div>
<div style="left:743.2px;top:220.2px;width:6.6px;height:131.6px;background:#f0f0f0"></div>
<div style="left:743.6px;top:230px;width:5.6px;height:29.4px;background:#c9c9c9"></div>
<svg style="left:744.6px;top:224.4px;" width="3.4" height="2.2" viewBox="0 0 3.4 2.2"><path d="M.3 1.9l1.4-1.5 1.4 1.5" fill="none" stroke="#444" stroke-width=".6"/></svg>
<svg style="left:744.4px;top:347.4px;" width="3.8" height="2.4" viewBox="0 0 3.8 2.4"><path d="M.2 .2h3.4l-1.7 2z" fill="#333"/></svg>
<div style="left:497.2px;top:230.8px;width:246px;height:8.5px;background:#1d6fc3"></div>
<div style="left:506px;top:230.8px;width:0.6px;height:8.5px;background:#dbe8f7"></div>
<div style="left:526.2px;top:230.8px;width:0.6px;height:8.5px;background:#dbe8f7"></div>
<div style="left:555.2px;top:230.8px;width:0.6px;height:8.5px;background:#dbe8f7"></div>
<div style="left:584.1px;top:230.8px;width:0.6px;height:8.5px;background:#dbe8f7"></div>
<div style="left:611.1px;top:230.8px;width:0.6px;height:8.5px;background:#dbe8f7"></div>
<div style="left:626.9px;top:230.8px;width:0.6px;height:8.5px;background:#dbe8f7"></div>
<div style="left:652.1px;top:230.8px;width:0.6px;height:8.5px;background:#dbe8f7"></div>
<div style="left:696.1px;top:230.8px;width:0.6px;height:8.5px;background:#dbe8f7"></div>
<div style="left:723.6px;top:230.8px;width:0.6px;height:8.5px;background:#dbe8f7"></div>
<svg style="left:491.4px;top:232.6px;" width="5.4" height="5.4" viewBox="0 0 5.4 5.4"><rect x=".3" y=".3" width="4.8" height="4.8" fill="#fff" stroke="#555" stroke-width=".65"/><path d="M1.2 2.8l1.2 1.3 2-2.7" fill="none" stroke="#555" stroke-width=".75"/></svg>
<div class="t" style="left:498.8px;top:229.86px;font-size:4.9px;color:#fff;text-shadow:0 0 .4px rgba(255,255,255,.6);font-weight:bold">1</div>
<div class="t" style="left:509.2px;top:229.76px;font-size:4.6px;transform:scaleX(1.008);transform-origin:left center;color:#e8f0fa;font-weight:bold;text-shadow:none">-------</div>
<div class="t" style="left:528.8px;top:229.76px;font-size:4.6px;transform:scaleX(1.138);transform-origin:left center;color:#e8f0fa;font-weight:bold;text-shadow:none">-------</div>
<div class="t" style="left:558.2px;top:229.76px;font-size:4.6px;transform:scaleX(1.082);transform-origin:left center;color:#e8f0fa;font-weight:bold;text-shadow:none">-------</div>
<div class="t" style="left:587.2px;top:229.79px;font-size:4.7px;transform:scaleX(0.977);transform-origin:left center;color:#fff;text-shadow:0 0 .4px rgba(255,255,255,.6)">NORMAL</div>
<div class="t" style="left:616px;top:229.83px;font-size:4.8px;color:#fff;text-shadow:0 0 .4px rgba(255,255,255,.6);font-weight:bold">+</div>
<div class="t" style="left:628.8px;top:229.83px;font-size:4.8px;transform:scaleX(1.049);transform-origin:left center;color:#fff;text-shadow:0 0 .4px rgba(255,255,255,.6)">0.50</div>
<div class="t" style="left:657px;top:229.79px;font-size:4.7px;color:#fff;text-shadow:0 0 .4px rgba(255,255,255,.6);white-space:pre">+ - -</div>
<div class="t" style="left:699.6px;top:229.76px;font-size:4.6px;transform:scaleX(1.120);transform-origin:left center;color:#e8f0fa;font-weight:bold;text-shadow:none">-------</div>
<svg style="left:491.4px;top:241.22px;" width="5.4" height="5.4" viewBox="0 0 5.4 5.4"><rect x=".3" y=".3" width="4.8" height="4.8" fill="#fff" stroke="#555" stroke-width=".65"/><path d="M1.2 2.8l1.2 1.3 2-2.7" fill="none" stroke="#555" stroke-width=".75"/></svg>
<div class="t" style="left:498.8px;top:238.48px;font-size:4.9px;color:#262626;font-weight:bold">2</div>
<div class="t" style="left:509.2px;top:238.38px;font-size:4.6px;transform:scaleX(1.008);transform-origin:left center;color:#555;font-weight:bold">-------</div>
<div class="t" style="left:528.8px;top:238.38px;font-size:4.6px;transform:scaleX(1.138);transform-origin:left center;color:#555;font-weight:bold">-------</div>
<div class="t" style="left:558.2px;top:238.38px;font-size:4.6px;transform:scaleX(1.082);transform-origin:left center;color:#555;font-weight:bold">-------</div>
<div class="t" style="left:587.2px;top:238.41px;font-size:4.7px;transform:scaleX(0.977);transform-origin:left center;color:#262626">NORMAL</div>
<div class="t" style="left:616px;top:238.45px;font-size:4.8px;color:#262626">-</div>
<div class="t" style="left:628.8px;top:238.45px;font-size:4.8px;transform:scaleX(1.049);transform-origin:left center;color:#262626">0.50</div>
<div class="t" style="left:657px;top:238.41px;font-size:4.7px;color:#262626;white-space:pre">+ - -</div>
<div class="t" style="left:699.6px;top:238.38px;font-size:4.6px;transform:scaleX(1.120);transform-origin:left center;color:#555;font-weight:bold">-------</div>
<svg style="left:491.4px;top:249.84px;" width="5.4" height="5.4" viewBox="0 0 5.4 5.4"><rect x=".3" y=".3" width="4.8" height="4.8" fill="#fff" stroke="#555" stroke-width=".65"/><path d="M1.2 2.8l1.2 1.3 2-2.7" fill="none" stroke="#555" stroke-width=".75"/></svg>
<div class="t" style="left:498.8px;top:247.1px;font-size:4.9px;color:#262626;font-weight:bold">3</div>
<div class="t" style="left:509.2px;top:247px;font-size:4.6px;transform:scaleX(1.008);transform-origin:left center;color:#555;font-weight:bold">-------</div>
<div class="t" style="left:528.8px;top:247px;font-size:4.6px;transform:scaleX(1.138);transform-origin:left center;color:#555;font-weight:bold">-------</div>
<div class="t" style="left:558.2px;top:247px;font-size:4.6px;transform:scaleX(1.082);transform-origin:left center;color:#555;font-weight:bold">-------</div>
<div class="t" style="left:587.2px;top:247.03px;font-size:4.7px;transform:scaleX(0.977);transform-origin:left center;color:#262626">NORMAL</div>
<div class="t" style="left:616px;top:247.07px;font-size:4.8px;color:#262626;font-weight:bold">+</div>
<div class="t" style="left:628.8px;top:247.07px;font-size:4.8px;transform:scaleX(1.049);transform-origin:left center;color:#262626">0.50</div>
<div class="t" style="left:657px;top:247.03px;font-size:4.7px;color:#262626;white-space:pre">- - +</div>
<div class="t" style="left:699.6px;top:247px;font-size:4.6px;transform:scaleX(1.120);transform-origin:left center;color:#555;font-weight:bold">-------</div>
<svg style="left:491.4px;top:258.46px;" width="5.4" height="5.4" viewBox="0 0 5.4 5.4"><rect x=".3" y=".3" width="4.8" height="4.8" fill="#fff" stroke="#555" stroke-width=".65"/><path d="M1.2 2.8l1.2 1.3 2-2.7" fill="none" stroke="#555" stroke-width=".75"/></svg>
<div class="t" style="left:498.8px;top:255.72px;font-size:4.9px;color:#262626;font-weight:bold">4</div>
<div class="t" style="left:509.2px;top:255.62px;font-size:4.6px;transform:scaleX(1.008);transform-origin:left center;color:#555;font-weight:bold">-------</div>
<div class="t" style="left:528.8px;top:255.62px;font-size:4.6px;transform:scaleX(1.138);transform-origin:left center;color:#555;font-weight:bold">-------</div>
<div class="t" style="left:558.2px;top:255.62px;font-size:4.6px;transform:scaleX(1.082);transform-origin:left center;color:#555;font-weight:bold">-------</div>
<div class="t" style="left:587.2px;top:255.65px;font-size:4.7px;transform:scaleX(0.977);transform-origin:left center;color:#262626">NORMAL</div>
<div class="t" style="left:616px;top:255.69px;font-size:4.8px;color:#262626">-</div>
<div class="t" style="left:628.8px;top:255.69px;font-size:4.8px;transform:scaleX(1.049);transform-origin:left center;color:#262626">0.50</div>
<div class="t" style="left:657px;top:255.65px;font-size:4.7px;color:#262626;white-space:pre">- - +</div>
<div class="t" style="left:699.6px;top:255.62px;font-size:4.6px;transform:scaleX(1.120);transform-origin:left center;color:#555;font-weight:bold">-------</div>
<svg style="left:491.4px;top:267.08px;" width="5.4" height="5.4" viewBox="0 0 5.4 5.4"><rect x=".3" y=".3" width="4.8" height="4.8" fill="#fff" stroke="#555" stroke-width=".65"/><path d="M1.2 2.8l1.2 1.3 2-2.7" fill="none" stroke="#555" stroke-width=".75"/></svg>
<div class="t" style="left:498.8px;top:264.34px;font-size:4.9px;color:#262626;font-weight:bold">5</div>
<div class="t" style="left:509.2px;top:264.24px;font-size:4.6px;transform:scaleX(1.008);transform-origin:left center;color:#555;font-weight:bold">-------</div>
<div class="t" style="left:528.8px;top:264.24px;font-size:4.6px;transform:scaleX(1.138);transform-origin:left center;color:#555;font-weight:bold">-------</div>
<div class="t" style="left:558.2px;top:264.24px;font-size:4.6px;transform:scaleX(1.082);transform-origin:left center;color:#555;font-weight:bold">-------</div>
<div class="t" style="left:587.2px;top:264.27px;font-size:4.7px;transform:scaleX(0.987);transform-origin:left center;color:#262626">COMMON</div>
<div class="t" style="left:616px;top:264.31px;font-size:4.8px;color:#262626;font-weight:bold">+</div>
<div class="t" style="left:628.8px;top:264.31px;font-size:4.8px;transform:scaleX(1.049);transform-origin:left center;color:#262626">0.50</div>
<div class="t" style="left:657px;top:264.27px;font-size:4.7px;color:#262626;white-space:pre">+ - PE</div>
<div class="t" style="left:699.6px;top:264.24px;font-size:4.6px;transform:scaleX(1.120);transform-origin:left center;color:#555;font-weight:bold">-------</div>
<svg style="left:491.4px;top:275.7px;" width="5.4" height="5.4" viewBox="0 0 5.4 5.4"><rect x=".3" y=".3" width="4.8" height="4.8" fill="#fff" stroke="#555" stroke-width=".65"/><path d="M1.2 2.8l1.2 1.3 2-2.7" fill="none" stroke="#555" stroke-width=".75"/></svg>
<div class="t" style="left:498.8px;top:272.96px;font-size:4.9px;color:#262626;font-weight:bold">6</div>
<div class="t" style="left:509.2px;top:272.86px;font-size:4.6px;transform:scaleX(1.008);transform-origin:left center;color:#555;font-weight:bold">-------</div>
<div class="t" style="left:528.8px;top:272.86px;font-size:4.6px;transform:scaleX(1.138);transform-origin:left center;color:#555;font-weight:bold">-------</div>
<div class="t" style="left:558.2px;top:272.86px;font-size:4.6px;transform:scaleX(1.082);transform-origin:left center;color:#555;font-weight:bold">-------</div>
<div class="t" style="left:587.2px;top:272.89px;font-size:4.7px;transform:scaleX(0.987);transform-origin:left center;color:#262626">COMMON</div>
<div class="t" style="left:616px;top:272.93px;font-size:4.8px;color:#262626;font-weight:bold">+</div>
<div class="t" style="left:628.8px;top:272.93px;font-size:4.8px;transform:scaleX(1.049);transform-origin:left center;color:#262626">0.50</div>
<div class="t" style="left:657px;top:272.89px;font-size:4.7px;color:#262626;white-space:pre">- - PE</div>
<div class="t" style="left:699.6px;top:272.86px;font-size:4.6px;transform:scaleX(1.120);transform-origin:left center;color:#555;font-weight:bold">-------</div>
<svg style="left:491.4px;top:284.32px;" width="5.4" height="5.4" viewBox="0 0 5.4 5.4"><rect x=".3" y=".3" width="4.8" height="4.8" fill="#fff" stroke="#555" stroke-width=".65"/><path d="M1.2 2.8l1.2 1.3 2-2.7" fill="none" stroke="#555" stroke-width=".75"/></svg>
<div class="t" style="left:498.8px;top:281.58px;font-size:4.9px;color:#262626;font-weight:bold">7</div>
<div class="t" style="left:509.2px;top:281.48px;font-size:4.6px;transform:scaleX(1.008);transform-origin:left center;color:#555;font-weight:bold">-------</div>
<div class="t" style="left:528.8px;top:281.48px;font-size:4.6px;transform:scaleX(1.138);transform-origin:left center;color:#555;font-weight:bold">-------</div>
<div class="t" style="left:558.2px;top:281.48px;font-size:4.6px;transform:scaleX(1.082);transform-origin:left center;color:#555;font-weight:bold">-------</div>
<div class="t" style="left:587.2px;top:281.51px;font-size:4.7px;transform:scaleX(0.987);transform-origin:left center;color:#262626">COMMON</div>
<div class="t" style="left:616px;top:281.55px;font-size:4.8px;color:#262626;font-weight:bold">+</div>
<div class="t" style="left:628.8px;top:281.55px;font-size:4.8px;transform:scaleX(1.049);transform-origin:left center;color:#262626">0.50</div>
<div class="t" style="left:656px;top:281.51px;font-size:4.7px;transform:scaleX(0.959);transform-origin:left center;color:#262626">全相印加</div>
<div class="t" style="left:699.6px;top:281.48px;font-size:4.6px;transform:scaleX(1.120);transform-origin:left center;color:#555;font-weight:bold">-------</div>
<svg style="left:491.4px;top:292.94px;" width="5.4" height="5.4" viewBox="0 0 5.4 5.4"><rect x=".3" y=".3" width="4.8" height="4.8" fill="#fff" stroke="#555" stroke-width=".65"/><path d="M1.2 2.8l1.2 1.3 2-2.7" fill="none" stroke="#555" stroke-width=".75"/></svg>
<div class="t" style="left:498.8px;top:290.2px;font-size:4.9px;color:#262626;font-weight:bold">8</div>
<div class="t" style="left:509.2px;top:290.1px;font-size:4.6px;transform:scaleX(1.008);transform-origin:left center;color:#555;font-weight:bold">-------</div>
<div class="t" style="left:528.8px;top:290.1px;font-size:4.6px;transform:scaleX(1.138);transform-origin:left center;color:#555;font-weight:bold">-------</div>
<div class="t" style="left:558.2px;top:290.1px;font-size:4.6px;transform:scaleX(1.082);transform-origin:left center;color:#555;font-weight:bold">-------</div>
<div class="t" style="left:587.2px;top:290.13px;font-size:4.7px;transform:scaleX(0.977);transform-origin:left center;color:#262626">NORMAL</div>
<div class="t" style="left:616px;top:290.17px;font-size:4.8px;color:#262626;font-weight:bold">+</div>
<div class="t" style="left:628.8px;top:290.17px;font-size:4.8px;transform:scaleX(1.049);transform-origin:left center;color:#262626">1.00</div>
<div class="t" style="left:657px;top:290.13px;font-size:4.7px;color:#262626;white-space:pre">+ - -</div>
<div class="t" style="left:699.6px;top:290.1px;font-size:4.6px;transform:scaleX(1.120);transform-origin:left center;color:#555;font-weight:bold">-------</div>
<svg style="left:491.4px;top:301.56px;" width="5.4" height="5.4" viewBox="0 0 5.4 5.4"><rect x=".3" y=".3" width="4.8" height="4.8" fill="#fff" stroke="#555" stroke-width=".65"/><path d="M1.2 2.8l1.2 1.3 2-2.7" fill="none" stroke="#555" stroke-width=".75"/></svg>
<div class="t" style="left:498.8px;top:298.82px;font-size:4.9px;color:#262626;font-weight:bold">9</div>
<div class="t" style="left:509.2px;top:298.72px;font-size:4.6px;transform:scaleX(1.008);transform-origin:left center;color:#555;font-weight:bold">-------</div>
<div class="t" style="left:528.8px;top:298.72px;font-size:4.6px;transform:scaleX(1.138);transform-origin:left center;color:#555;font-weight:bold">-------</div>
<div class="t" style="left:558.2px;top:298.72px;font-size:4.6px;transform:scaleX(1.082);transform-origin:left center;color:#555;font-weight:bold">-------</div>
<div class="t" style="left:587.2px;top:298.75px;font-size:4.7px;transform:scaleX(0.977);transform-origin:left center;color:#262626">NORMAL</div>
<div class="t" style="left:616px;top:298.79px;font-size:4.8px;color:#262626">-</div>
<div class="t" style="left:628.8px;top:298.79px;font-size:4.8px;transform:scaleX(1.049);transform-origin:left center;color:#262626">1.00</div>
<div class="t" style="left:657px;top:298.75px;font-size:4.7px;color:#262626;white-space:pre">+ - -</div>
<div class="t" style="left:699.6px;top:298.72px;font-size:4.6px;transform:scaleX(1.120);transform-origin:left center;color:#555;font-weight:bold">-------</div>
<svg style="left:491.4px;top:310.18px;" width="5.4" height="5.4" viewBox="0 0 5.4 5.4"><rect x=".3" y=".3" width="4.8" height="4.8" fill="#fff" stroke="#555" stroke-width=".65"/><path d="M1.2 2.8l1.2 1.3 2-2.7" fill="none" stroke="#555" stroke-width=".75"/></svg>
<div class="t" style="left:498.8px;top:307.44px;font-size:4.9px;color:#262626;font-weight:bold">10</div>
<div class="t" style="left:509.2px;top:307.34px;font-size:4.6px;transform:scaleX(1.008);transform-origin:left center;color:#555;font-weight:bold">-------</div>
<div class="t" style="left:528.8px;top:307.34px;font-size:4.6px;transform:scaleX(1.138);transform-origin:left center;color:#555;font-weight:bold">-------</div>
<div class="t" style="left:558.2px;top:307.34px;font-size:4.6px;transform:scaleX(1.082);transform-origin:left center;color:#555;font-weight:bold">-------</div>
<div class="t" style="left:587.2px;top:307.37px;font-size:4.7px;transform:scaleX(0.977);transform-origin:left center;color:#262626">NORMAL</div>
<div class="t" style="left:616px;top:307.41px;font-size:4.8px;color:#262626;font-weight:bold">+</div>
<div class="t" style="left:628.8px;top:307.41px;font-size:4.8px;transform:scaleX(1.049);transform-origin:left center;color:#262626">1.00</div>
<div class="t" style="left:657px;top:307.37px;font-size:4.7px;color:#262626;white-space:pre">- - +</div>
<div class="t" style="left:699.6px;top:307.34px;font-size:4.6px;transform:scaleX(1.120);transform-origin:left center;color:#555;font-weight:bold">-------</div>
<svg style="left:491.4px;top:318.8px;" width="5.4" height="5.4" viewBox="0 0 5.4 5.4"><rect x=".3" y=".3" width="4.8" height="4.8" fill="#fff" stroke="#555" stroke-width=".65"/><path d="M1.2 2.8l1.2 1.3 2-2.7" fill="none" stroke="#555" stroke-width=".75"/></svg>
<div class="t" style="left:498.8px;top:316.06px;font-size:4.9px;color:#262626;font-weight:bold">11</div>
<div class="t" style="left:509.2px;top:315.96px;font-size:4.6px;transform:scaleX(1.008);transform-origin:left center;color:#555;font-weight:bold">-------</div>
<div class="t" style="left:528.8px;top:315.96px;font-size:4.6px;transform:scaleX(1.138);transform-origin:left center;color:#555;font-weight:bold">-------</div>
<div class="t" style="left:558.2px;top:315.96px;font-size:4.6px;transform:scaleX(1.082);transform-origin:left center;color:#555;font-weight:bold">-------</div>
<div class="t" style="left:587.2px;top:315.99px;font-size:4.7px;transform:scaleX(0.977);transform-origin:left center;color:#262626">NORMAL</div>
<div class="t" style="left:616px;top:316.03px;font-size:4.8px;color:#262626">-</div>
<div class="t" style="left:628.8px;top:316.03px;font-size:4.8px;transform:scaleX(1.049);transform-origin:left center;color:#262626">1.00</div>
<div class="t" style="left:657px;top:315.99px;font-size:4.7px;color:#262626;white-space:pre">- - +</div>
<div class="t" style="left:699.6px;top:315.96px;font-size:4.6px;transform:scaleX(1.120);transform-origin:left center;color:#555;font-weight:bold">-------</div>
<svg style="left:491.4px;top:327.42px;" width="5.4" height="5.4" viewBox="0 0 5.4 5.4"><rect x=".3" y=".3" width="4.8" height="4.8" fill="#fff" stroke="#555" stroke-width=".65"/><path d="M1.2 2.8l1.2 1.3 2-2.7" fill="none" stroke="#555" stroke-width=".75"/></svg>
<div class="t" style="left:498.8px;top:324.68px;font-size:4.9px;color:#262626;font-weight:bold">12</div>
<div class="t" style="left:509.2px;top:324.58px;font-size:4.6px;transform:scaleX(1.008);transform-origin:left center;color:#555;font-weight:bold">-------</div>
<div class="t" style="left:528.8px;top:324.58px;font-size:4.6px;transform:scaleX(1.138);transform-origin:left center;color:#555;font-weight:bold">-------</div>
<div class="t" style="left:558.2px;top:324.58px;font-size:4.6px;transform:scaleX(1.082);transform-origin:left center;color:#555;font-weight:bold">-------</div>
<div class="t" style="left:587.2px;top:324.61px;font-size:4.7px;transform:scaleX(0.977);transform-origin:left center;color:#262626">NORMAL</div>
<div class="t" style="left:616px;top:324.65px;font-size:4.8px;color:#262626;font-weight:bold">+</div>
<div class="t" style="left:628.8px;top:324.65px;font-size:4.8px;transform:scaleX(1.049);transform-origin:left center;color:#262626">1.50</div>
<div class="t" style="left:657px;top:324.61px;font-size:4.7px;color:#262626;white-space:pre">+ - -</div>
<div class="t" style="left:699.6px;top:324.58px;font-size:4.6px;transform:scaleX(1.120);transform-origin:left center;color:#555;font-weight:bold">-------</div>
<svg style="left:491.4px;top:336.04px;" width="5.4" height="5.4" viewBox="0 0 5.4 5.4"><rect x=".3" y=".3" width="4.8" height="4.8" fill="#fff" stroke="#555" stroke-width=".65"/><path d="M1.2 2.8l1.2 1.3 2-2.7" fill="none" stroke="#555" stroke-width=".75"/></svg>
<div class="t" style="left:498.8px;top:333.3px;font-size:4.9px;color:#262626;font-weight:bold">13</div>
<div class="t" style="left:509.2px;top:333.2px;font-size:4.6px;transform:scaleX(1.008);transform-origin:left center;color:#555;font-weight:bold">-------</div>
<div class="t" style="left:528.8px;top:333.2px;font-size:4.6px;transform:scaleX(1.138);transform-origin:left center;color:#555;font-weight:bold">-------</div>
<div class="t" style="left:558.2px;top:333.2px;font-size:4.6px;transform:scaleX(1.082);transform-origin:left center;color:#555;font-weight:bold">-------</div>
<div class="t" style="left:587.2px;top:333.23px;font-size:4.7px;transform:scaleX(0.977);transform-origin:left center;color:#262626">NORMAL</div>
<div class="t" style="left:616px;top:333.27px;font-size:4.8px;color:#262626">-</div>
<div class="t" style="left:628.8px;top:333.27px;font-size:4.8px;transform:scaleX(1.049);transform-origin:left center;color:#262626">1.50</div>
<div class="t" style="left:657px;top:333.23px;font-size:4.7px;color:#262626;white-space:pre">+ - -</div>
<div class="t" style="left:699.6px;top:333.2px;font-size:4.6px;transform:scaleX(1.120);transform-origin:left center;color:#555;font-weight:bold">-------</div>
<svg style="left:491.4px;top:344.66px;" width="5.4" height="5.4" viewBox="0 0 5.4 5.4"><rect x=".3" y=".3" width="4.8" height="4.8" fill="#fff" stroke="#555" stroke-width=".65"/><path d="M1.2 2.8l1.2 1.3 2-2.7" fill="none" stroke="#555" stroke-width=".75"/></svg>
<div class="t" style="left:498.8px;top:341.92px;font-size:4.9px;color:#262626;font-weight:bold">14</div>
<div class="t" style="left:509.2px;top:341.82px;font-size:4.6px;transform:scaleX(1.008);transform-origin:left center;color:#555;font-weight:bold">-------</div>
<div class="t" style="left:528.8px;top:341.82px;font-size:4.6px;transform:scaleX(1.138);transform-origin:left center;color:#555;font-weight:bold">-------</div>
<div class="t" style="left:558.2px;top:341.82px;font-size:4.6px;transform:scaleX(1.082);transform-origin:left center;color:#555;font-weight:bold">-------</div>
<div class="t" style="left:587.2px;top:341.85px;font-size:4.7px;transform:scaleX(0.977);transform-origin:left center;color:#262626">NORMAL</div>
<div class="t" style="left:616px;top:341.89px;font-size:4.8px;color:#262626;font-weight:bold">+</div>
<div class="t" style="left:628.8px;top:341.89px;font-size:4.8px;transform:scaleX(1.049);transform-origin:left center;color:#262626">1.50</div>
<div class="t" style="left:657px;top:341.85px;font-size:4.7px;color:#262626;white-space:pre">- - +</div>
<div class="t" style="left:699.6px;top:341.82px;font-size:4.6px;transform:scaleX(1.120);transform-origin:left center;color:#555;font-weight:bold">-------</div>
<div style="left:489px;top:351.8px;width:260.8px;height:7.6px;background:#f0f0f0"></div>
<div style="left:496.6px;top:352.4px;width:232.8px;height:6.4px;background:#c6c6c6"></div>
<svg style="left:491.2px;top:353.8px;" width="2.2" height="3.4" viewBox="0 0 2.2 3.4"><path d="M1.9 .3l-1.5 1.4 1.5 1.4" fill="none" stroke="#444" stroke-width=".7"/></svg>
<svg style="left:738.2px;top:353.8px;" width="2.2" height="3.4" viewBox="0 0 2.2 3.4"><path d="M.3 .3l1.5 1.4-1.5 1.4z" fill="#333" stroke="#333" stroke-width=".5"/></svg>
<div style="left:250px;top:141.6px;width:52px;height:10.8px;background:#eeeeee;border-right:.9px solid #6f6f6f;border-bottom:.9px solid #6f6f6f;border-top:.7px solid #dcdcdc;border-left:.7px solid #dcdcdc"></div>
<div style="left:302.6px;top:140.8px;width:50px;height:12.6px;background:#f7f7f7"></div>
<div class="t" style="left:125.6px;width:300px;text-align:center;top:141.04px;font-size:5.1px;font-weight:bold;color:#222"><span style="display:inline-block;transform:scaleX(1.078);transform-origin:center center;">STANDARD</span></div>
<div class="t" style="left:177.6px;width:300px;text-align:center;top:141.04px;font-size:5.1px;font-weight:bold;color:#222"><span style="display:inline-block;transform:scaleX(1.051);transform-origin:center center;">MANUAL</span></div>
<div style="left:281px;top:154.2px;width:31.4px;height:11.6px;background:#fbfbfb"></div>
<div class="t" style="left:254px;top:154.69px;font-size:4.7px;transform:scaleX(1.008);transform-origin:left center;color:#333">AC LINE</div>
<div class="t" style="left:284px;top:153.89px;font-size:4.7px;transform:scaleX(1.027);transform-origin:left center;color:#222">DC LINE</div>
<div class="t" style="left:315px;top:154.69px;font-size:4.7px;transform:scaleX(0.983);transform-origin:left center;color:#333">SURGE OUTPUT</div>
<div style="left:253.4px;top:166.2px;width:144.6px;height:24.4px;border:.7px solid #cfcfcf"></div>
<div style="left:254px;top:166.8px;width:40.4px;height:11.2px;background:#d9d9ef"></div>
<div style="left:254px;top:179px;width:40.4px;height:11px;background:#d9d9ef"></div>
<div style="left:253.4px;top:178.1px;width:144.6px;height:0.7px;background:#cfcfcf"></div>
<div class="t" style="left:124.2px;width:300px;text-align:center;top:166.27px;font-size:5.2px;color:#222"><span style="display:inline-block;transform:scaleX(1.006);transform-origin:center center;">EUT LINE</span></div>
<div class="t" style="left:124.2px;width:300px;text-align:center;top:178.62px;font-size:5.6px;color:#222"><span style="display:inline-block;transform:scaleX(0.864);transform-origin:center center;">カップリング</span></div>
<div style="left:301px;top:167.4px;width:89.8px;height:10.2px;background:linear-gradient(#ececec,#dcdcdc);border:.5px solid #cfcfcf"></div>
<div style="left:301px;top:179.6px;width:89.8px;height:10.2px;background:linear-gradient(#ececec,#dcdcdc);border:.5px solid #cfcfcf"></div>
<div style="left:295.4px;top:167.4px;width:5px;height:22.4px;background:#f6f6f6"></div>
<div style="left:391.4px;top:167.4px;width:5.6px;height:22.4px;background:#f6f6f6"></div>
<div class="t" style="left:303.6px;top:167.46px;font-size:4.6px;transform:scaleX(1.126);transform-origin:left center;color:#222">+, -, PE</div>
<div class="t" style="left:303.6px;top:179.66px;font-size:4.6px;transform:scaleX(1.169);transform-origin:left center;color:#222">10Ω+9uF</div>
<svg style="left:384.4px;top:171.6px;" width="4" height="2.6" viewBox="0 0 4 2.6"><path d="M.4 .4l1.6 1.6 1.6-1.6" fill="none" stroke="#555" stroke-width=".6"/></svg>
<svg style="left:384.4px;top:183.8px;" width="4" height="2.6" viewBox="0 0 4 2.6"><path d="M.4 .4l1.6 1.6 1.6-1.6" fill="none" stroke="#555" stroke-width=".6"/></svg>
<div class="t" style="left:257.2px;top:190.49px;font-size:4.7px;transform:scaleX(1.067);transform-origin:left center;color:#222">NORMAL</div>
<div class="t" style="left:357px;top:190.49px;font-size:4.7px;transform:scaleX(1.051);transform-origin:left center;color:#222">COMMON</div>
<div style="left:255.4px;top:199.8px;width:94.6px;height:48.8px;border:.7px solid #cfcfcf"></div>
<div style="left:256px;top:200.4px;width:93.4px;height:8.8px;background:#d9d9ef"></div>
<div class="t" style="left:256.6px;top:198.67px;font-size:5.2px;transform:scaleX(1.033);transform-origin:left center;color:#223">印加相-リターン相</div>
<svg style="left:257.2px;top:212.7px;" width="5.4" height="5.4" viewBox="0 0 5.4 5.4"><rect x=".3" y=".3" width="4.8" height="4.8" fill="#fff" stroke="#444" stroke-width=".65"/><path d="M1.2 2.8l1.2 1.3 2-2.7" fill="none" stroke="#444" stroke-width=".75"/></svg>
<div class="t" style="left:264.6px;top:209.2px;font-size:5px;transform:scaleX(1.594);transform-origin:left center;white-space:pre">+ - -</div>
<svg style="left:289.2px;top:212.7px;" width="5.4" height="5.4" viewBox="0 0 5.4 5.4"><rect x=".3" y=".3" width="4.8" height="4.8" fill="#fff" stroke="#444" stroke-width=".65"/><path d="M1.2 2.8l1.2 1.3 2-2.7" fill="none" stroke="#444" stroke-width=".75"/></svg>
<div class="t" style="left:296.6px;top:209.2px;font-size:5px;transform:scaleX(1.528);transform-origin:left center;white-space:pre">- - +</div>
<div style="left:355px;top:199.8px;width:53px;height:48.8px;border:.7px solid #cfcfcf"></div>
<div style="left:355.6px;top:200.4px;width:51.8px;height:8.8px;background:#d9d9ef"></div>
<div class="t" style="left:356.4px;top:198.67px;font-size:5.2px;transform:scaleX(1.024);transform-origin:left center;color:#223">印加相-リターン相</div>
<svg style="left:357.6px;top:212.7px;" width="5.4" height="5.4" viewBox="0 0 5.4 5.4"><rect x=".3" y=".3" width="4.8" height="4.8" fill="#fff" stroke="#444" stroke-width=".65"/><path d="M1.2 2.8l1.2 1.3 2-2.7" fill="none" stroke="#444" stroke-width=".75"/></svg>
<div class="t" style="left:365px;top:209.2px;font-size:5px;transform:scaleX(0.930);transform-origin:left center;white-space:pre">+ - ·</div>
<div class="t" style="left:374.8px;top:209.91px;font-size:4.2px;transform:scaleX(1.001);transform-origin:left center;color:#333">PE</div>
<svg style="left:357.6px;top:222.1px;" width="5.4" height="5.4" viewBox="0 0 5.4 5.4"><rect x=".3" y=".3" width="4.8" height="4.8" fill="#fff" stroke="#444" stroke-width=".65"/><path d="M1.2 2.8l1.2 1.3 2-2.7" fill="none" stroke="#444" stroke-width=".75"/></svg>
<div class="t" style="left:365.4px;top:218.6px;font-size:5px;transform:scaleX(1.028);transform-origin:left center;white-space:pre">- - ·</div>
<div class="t" style="left:374.8px;top:219.31px;font-size:4.2px;transform:scaleX(1.001);transform-origin:left center;color:#333">PE</div>
<div class="t" style="left:258px;top:250.93px;font-size:4.8px;transform:scaleX(1.125);transform-origin:left center;">全相印加 :</div>
<svg style="left:289.2px;top:253.5px;" width="5.4" height="5.4" viewBox="0 0 5.4 5.4"><rect x=".3" y=".3" width="4.8" height="4.8" fill="#fff" stroke="#444" stroke-width=".65"/><path d="M1.2 2.8l1.2 1.3 2-2.7" fill="none" stroke="#444" stroke-width=".75"/></svg>
<div class="t" style="left:296.6px;top:250px;font-size:5px;transform:scaleX(1.306);transform-origin:left center;white-space:pre">++- - ·</div>
<div class="t" style="left:315.8px;top:250.71px;font-size:4.2px;transform:scaleX(1.037);transform-origin:left center;color:#333">PE</div>
<div style="left:253.8px;top:265px;width:73.8px;height:91.2px;border:.7px solid #cfcfcf"></div>
<div style="left:254.4px;top:265.6px;width:72.6px;height:12.8px;background:#d9d9ef"></div>
<svg style="left:254.8px;top:266px;" width="11.6" height="12" viewBox="0 0 12 12"><path d="M1.2 .4v10.8h9.4" fill="none" stroke="#1a1a3a" stroke-width="1"/><path d="M1.4 1.4c2 4 5 7.4 9 9.6" fill="none" stroke="#1a1a3a" stroke-width="1"/><path d="M11.2 .4v11" stroke="#1a1a3a" stroke-width="1"/></svg>
<div class="t" style="left:269.6px;top:266.33px;font-size:4.8px;transform:scaleX(1.093);transform-origin:left center;color:#222">電圧(NORMAL)</div>
<svg style="left:256.4px;top:283.2px;" width="5.2" height="5.2" viewBox="0 0 5.2 5.2"><circle cx="2.6" cy="2.6" r="2.25" fill="#fff" stroke="#3c3c3c" stroke-width=".5"/></svg>
<div class="t" style="left:263px;top:279.6px;font-size:5px;font-weight:bold">+</div>
<svg style="left:274px;top:283.2px;" width="5.2" height="5.2" viewBox="0 0 5.2 5.2"><circle cx="2.6" cy="2.6" r="2.25" fill="#fff" stroke="#3c3c3c" stroke-width=".5"/></svg>
<div class="t" style="left:280.6px;top:279.6px;font-size:5px;">-</div>
<svg style="left:292px;top:283.2px;" width="5.2" height="5.2" viewBox="0 0 5.2 5.2"><circle cx="2.6" cy="2.6" r="2.25" fill="#fff" stroke="#3c3c3c" stroke-width=".5"/><circle cx="2.6" cy="2.6" r="1.15" fill="#222"/></svg>
<div class="t" style="left:299px;top:279.6px;font-size:5px;transform:scaleX(1.459);transform-origin:left center;">+⇒-</div>
<div style="left:254px;top:290.4px;width:72.6px;height:0.6px;background:#cfcfcf"></div>
<div style="left:272.4px;top:292px;width:21.6px;height:10px;background:#fafafa"></div>
<div class="t" style="left:257px;top:291.53px;font-size:4.8px;transform:scaleX(1.103);transform-origin:left center;">単独</div>
<div class="t" style="left:274.4px;top:291.13px;font-size:4.8px;transform:scaleX(0.963);transform-origin:left center;">スイープ</div>
<div class="t" style="left:295.8px;top:291.53px;font-size:4.8px;transform:scaleX(0.999);transform-origin:left center;">複数</div>
<div class="t" style="left:263.8px;top:306.93px;font-size:4.8px;transform:scaleX(1.061);transform-origin:left center;">開始</div>
<div style="left:277px;top:307.6px;width:21px;height:9.2px;background:#fff;border:.5px solid #d6d6d6"></div>
<div class="t" style="left:278.6px;top:307.16px;font-size:4.9px;color:#222">0.50</div>
<div style="left:293.2px;top:308.1px;width:4.3px;height:8.2px;background:#f1f1f1;border-left:.5px solid #d0d0d0"></div>
<svg style="left:294.2px;top:309.2px;" width="2.8" height="2" viewBox="0 0 2.8 2"><path d="M.2 1.8l1.2-1.4 1.2 1.4z" fill="#222"/></svg>
<svg style="left:294.2px;top:313.2px;" width="2.8" height="2" viewBox="0 0 2.8 2"><path d="M.2 .2l1.2 1.4 1.2-1.4z" fill="#222"/></svg>
<div class="t" style="left:301.6px;top:306px;font-size:5px;transform:scaleX(1.061);transform-origin:left center;">kV</div>
<div class="t" style="left:263.8px;top:319.73px;font-size:4.8px;transform:scaleX(1.061);transform-origin:left center;">終了</div>
<div style="left:277px;top:320.4px;width:21px;height:9.2px;background:#fff;border:.5px solid #d6d6d6"></div>
<div class="t" style="left:278.6px;top:319.96px;font-size:4.9px;color:#222">6.0</div>
<div style="left:293.2px;top:320.9px;width:4.3px;height:8.2px;background:#f1f1f1;border-left:.5px solid #d0d0d0"></div>
<svg style="left:294.2px;top:322px;" width="2.8" height="2" viewBox="0 0 2.8 2"><path d="M.2 1.8l1.2-1.4 1.2 1.4z" fill="#222"/></svg>
<svg style="left:294.2px;top:326px;" width="2.8" height="2" viewBox="0 0 2.8 2"><path d="M.2 .2l1.2 1.4 1.2-1.4z" fill="#222"/></svg>
<div class="t" style="left:301.6px;top:318.8px;font-size:5px;transform:scaleX(1.061);transform-origin:left center;">kV</div>
<div class="t" style="left:263.8px;top:332.73px;font-size:4.8px;transform:scaleX(1.061);transform-origin:left center;">刻み</div>
<div style="left:277px;top:333.4px;width:21px;height:9.2px;background:#fff;border:.5px solid #d6d6d6"></div>
<div class="t" style="left:278.6px;top:332.96px;font-size:4.9px;color:#222">0.5</div>
<div style="left:293.2px;top:333.9px;width:4.3px;height:8.2px;background:#f1f1f1;border-left:.5px solid #d0d0d0"></div>
<svg style="left:294.2px;top:335px;" width="2.8" height="2" viewBox="0 0 2.8 2"><path d="M.2 1.8l1.2-1.4 1.2 1.4z" fill="#222"/></svg>
<svg style="left:294.2px;top:339px;" width="2.8" height="2" viewBox="0 0 2.8 2"><path d="M.2 .2l1.2 1.4 1.2-1.4z" fill="#222"/></svg>
<div class="t" style="left:301.6px;top:331.8px;font-size:5px;transform:scaleX(1.061);transform-origin:left center;">kV</div>
<div style="left:330.4px;top:265px;width:68.6px;height:91.2px;border:.7px solid #cfcfcf"></div>
<div style="left:331px;top:265.6px;width:67.4px;height:12.8px;background:#d9d9ef"></div>
<svg style="left:331.2px;top:266px;" width="11.6" height="12" viewBox="0 0 12 12"><path d="M1.2 .4v10.8h9.4" fill="none" stroke="#1a1a3a" stroke-width="1"/><path d="M1.4 1.4c2 4 5 7.4 9 9.6" fill="none" stroke="#1a1a3a" stroke-width="1"/><path d="M11.2 .4v11" stroke="#1a1a3a" stroke-width="1"/></svg>
<div class="t" style="left:345px;top:266.33px;font-size:4.8px;transform:scaleX(1.126);transform-origin:left center;color:#222">電圧(COMMON)</div>
<svg style="left:332px;top:283.2px;" width="5.2" height="5.2" viewBox="0 0 5.2 5.2"><circle cx="2.6" cy="2.6" r="2.25" fill="#fff" stroke="#3c3c3c" stroke-width=".5"/><circle cx="2.6" cy="2.6" r="1.15" fill="#222"/></svg>
<div class="t" style="left:339px;top:279.6px;font-size:5px;font-weight:bold">+</div>
<svg style="left:350px;top:283.2px;" width="5.2" height="5.2" viewBox="0 0 5.2 5.2"><circle cx="2.6" cy="2.6" r="2.25" fill="#fff" stroke="#3c3c3c" stroke-width=".5"/></svg>
<div class="t" style="left:356.6px;top:279.6px;font-size:5px;">-</div>
<svg style="left:367.6px;top:283.2px;" width="5.2" height="5.2" viewBox="0 0 5.2 5.2"><circle cx="2.6" cy="2.6" r="2.25" fill="#fff" stroke="#3c3c3c" stroke-width=".5"/></svg>
<div class="t" style="left:374.6px;top:279.6px;font-size:5px;transform:scaleX(1.501);transform-origin:left center;">+⇒-</div>
<div style="left:329.2px;top:290.4px;width:69.6px;height:0.6px;background:#cfcfcf"></div>
<div style="left:331.4px;top:292px;width:15.2px;height:10px;background:#fafafa"></div>
<div class="t" style="left:333.4px;top:291.13px;font-size:4.8px;transform:scaleX(1.166);transform-origin:left center;">単独</div>
<div class="t" style="left:350.6px;top:291.53px;font-size:4.8px;transform:scaleX(0.867);transform-origin:left center;">スイープ</div>
<div class="t" style="left:370.6px;top:291.53px;font-size:4.8px;transform:scaleX(1.041);transform-origin:left center;">複数</div>
<div class="t" style="left:339px;top:306.93px;font-size:4.8px;transform:scaleX(0.999);transform-origin:left center;color:#111">開始</div>
<div style="left:352px;top:307.6px;width:20.8px;height:9.2px;background:#fff;border:.5px solid #d6d6d6"></div>
<div class="t" style="left:353.6px;top:307.16px;font-size:4.9px;color:#222">0.50</div>
<div style="left:368px;top:308.1px;width:4.3px;height:8.2px;background:#f1f1f1;border-left:.5px solid #d0d0d0"></div>
<svg style="left:369px;top:309.2px;" width="2.8" height="2" viewBox="0 0 2.8 2"><path d="M.2 1.8l1.2-1.4 1.2 1.4z" fill="#222"/></svg>
<svg style="left:369px;top:313.2px;" width="2.8" height="2" viewBox="0 0 2.8 2"><path d="M.2 .2l1.2 1.4 1.2-1.4z" fill="#222"/></svg>
<div class="t" style="left:377px;top:306px;font-size:5px;transform:scaleX(1.061);transform-origin:left center;color:#111">kV</div>
<div class="t" style="left:339px;top:319.73px;font-size:4.8px;transform:scaleX(0.999);transform-origin:left center;color:#666">終了</div>
<div style="left:352px;top:320.4px;width:20.8px;height:9.2px;background:#f4f4f4;border:.5px solid #dadada"></div>
<div class="t" style="left:353.6px;top:319.96px;font-size:4.9px;color:#8a8a8a">0</div>
<div style="left:368px;top:320.9px;width:4.3px;height:8.2px;background:#f1f1f1;border-left:.5px solid #d0d0d0"></div>
<svg style="left:369px;top:322px;" width="2.8" height="2" viewBox="0 0 2.8 2"><path d="M.2 1.8l1.2-1.4 1.2 1.4z" fill="#b5b5b5"/></svg>
<svg style="left:369px;top:326px;" width="2.8" height="2" viewBox="0 0 2.8 2"><path d="M.2 .2l1.2 1.4 1.2-1.4z" fill="#b5b5b5"/></svg>
<div class="t" style="left:377px;top:318.8px;font-size:5px;transform:scaleX(1.061);transform-origin:left center;color:#555">kV</div>
<div class="t" style="left:339px;top:332.73px;font-size:4.8px;transform:scaleX(0.999);transform-origin:left center;color:#666">刻み</div>
<div style="left:352px;top:333.4px;width:20.8px;height:9.2px;background:#f4f4f4;border:.5px solid #dadada"></div>
<div class="t" style="left:353.6px;top:332.96px;font-size:4.9px;color:#8a8a8a">0</div>
<div style="left:368px;top:333.9px;width:4.3px;height:8.2px;background:#f1f1f1;border-left:.5px solid #d0d0d0"></div>
<svg style="left:369px;top:335px;" width="2.8" height="2" viewBox="0 0 2.8 2"><path d="M.2 1.8l1.2-1.4 1.2 1.4z" fill="#b5b5b5"/></svg>
<svg style="left:369px;top:339px;" width="2.8" height="2" viewBox="0 0 2.8 2"><path d="M.2 .2l1.2 1.4 1.2-1.4z" fill="#b5b5b5"/></svg>
<div class="t" style="left:377px;top:331.8px;font-size:5px;transform:scaleX(1.061);transform-origin:left center;color:#555">kV</div>
<div style="left:354.4px;top:308.8px;width:0.5px;height:6.8px;background:#111"></div>
<div style="left:401.4px;top:266px;width:79.6px;height:39px;border:.7px solid #cfcfcf"></div>
<div style="left:402px;top:266.6px;width:20.6px;height:37.8px;background:#d9d9ef"></div>
<svg style="left:403px;top:270.6px;" width="18.6" height="19" viewBox="0 0 14 14"><path d="M1 0.5v12.6h12.2" fill="none" stroke="#1a1a3a" stroke-width=".9"/><path d="M1 13c.8-7 1.6-11.6 2.8-11.6 1.6 0 3 8.2 9 11.4" fill="none" stroke="#1a1a3a" stroke-width=".9"/></svg>
<div class="t" style="left:262.4px;width:300px;text-align:center;top:293.69px;font-size:4.7px;"><span style="display:inline-block;transform:scaleX(1.022);transform-origin:center center;">波形</span></div>
<div style="left:427px;top:272px;width:43.2px;height:8.8px;background:linear-gradient(#ececec,#dcdcdc);border:.5px solid #cfcfcf"></div>
<div class="t" style="left:429px;top:271.02px;font-size:4.5px;transform:scaleX(1.119);transform-origin:left center;color:#222">1.2/50</div>
<svg style="left:464.4px;top:275.8px;" width="4" height="2.6" viewBox="0 0 4 2.6"><path d="M.4 .4l1.6 1.6 1.6-1.6" fill="none" stroke="#555" stroke-width=".6"/></svg>
<div style="left:401.4px;top:307.2px;width:79.6px;height:22.4px;border:.7px solid #cfcfcf"></div>
<div style="left:402px;top:307.8px;width:25.6px;height:21.2px;background:#d9d9ef"></div>
<svg style="left:411px;top:308.6px;" width="8.4" height="13.2" viewBox="0 0 8.4 13.2"><path d="M3 .2h4.6l-2 4.8h2.6l-5.8 8 1.6-6.2h-3z" fill="#14142e"/></svg>
<div class="t" style="left:264.8px;width:300px;text-align:center;top:320.06px;font-size:4.6px;"><span style="display:inline-block;transform:scaleX(1.109);transform-origin:center center;">放電回数</span></div>
<div style="left:439.8px;top:313.6px;width:27.2px;height:9.4px;background:#fff;border:.5px solid #d6d6d6"></div>
<div class="t" style="left:441.4px;top:313.16px;font-size:4.6px;color:#222">5</div>
<div style="left:462.2px;top:314.1px;width:4.3px;height:8.4px;background:#f1f1f1;border-left:.5px solid #d0d0d0"></div>
<svg style="left:463.2px;top:315.3px;" width="2.8" height="2" viewBox="0 0 2.8 2"><path d="M.2 1.8l1.2-1.4 1.2 1.4z" fill="#222"/></svg>
<svg style="left:463.2px;top:319.3px;" width="2.8" height="2" viewBox="0 0 2.8 2"><path d="M.2 .2l1.2 1.4 1.2-1.4z" fill="#222"/></svg>
<div style="left:401.4px;top:332.2px;width:79.6px;height:23.6px;border:.7px solid #cfcfcf"></div>
<div style="left:402px;top:332.8px;width:25.6px;height:22.4px;background:#d9d9ef"></div>
<svg style="left:408.2px;top:333.6px;" width="13.6" height="13.2" viewBox="0 0 13.6 13.2"><path d="M3.2 3.2a5.1 5.1 0 1 0 3.6-1.5" fill="none" stroke="#14142e" stroke-width="1.6"/><path d="M.8 1.2l3.6-.6-.4 3.8z" fill="#14142e"/><path d="M4.8 6.4l1.9 1.8 2.6-2.9" fill="none" stroke="#14142e" stroke-width=".9"/></svg>
<div class="t" style="left:264.8px;width:300px;text-align:center;top:345.86px;font-size:4.6px;"><span style="display:inline-block;transform:scaleX(1.109);transform-origin:center center;">放電間隔</span></div>
<div style="left:439.8px;top:340px;width:21.6px;height:8.8px;background:#fff;border:.5px solid #d6d6d6"></div>
<div class="t" style="left:441.4px;top:339.26px;font-size:4.6px;color:#222">60</div>
<div style="left:456.6px;top:340.5px;width:4.3px;height:7.8px;background:#f1f1f1;border-left:.5px solid #d0d0d0"></div>
<svg style="left:457.6px;top:341.4px;" width="2.8" height="2" viewBox="0 0 2.8 2"><path d="M.2 1.8l1.2-1.4 1.2 1.4z" fill="#222"/></svg>
<svg style="left:457.6px;top:345.4px;" width="2.8" height="2" viewBox="0 0 2.8 2"><path d="M.2 .2l1.2 1.4 1.2-1.4z" fill="#222"/></svg>
<div class="t" style="left:466.2px;top:339.26px;font-size:4.6px;">秒</div>
<div style="left:0px;top:367.6px;width:768px;height:38.4px;background:#fff"></div>
<div class="t" id="cap" style="left:12.4px;top:375.8px;font-size:21.2px;line-height:24px;font-family:'Liberation Serif',serif;color:#222">* Software English version available</div></div></body></html>
